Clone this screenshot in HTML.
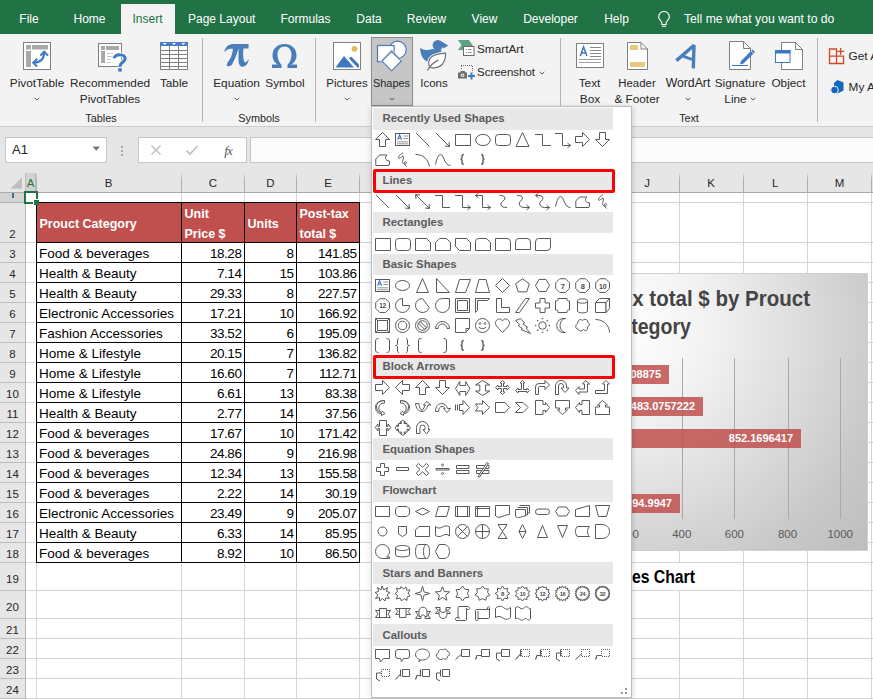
<!DOCTYPE html><html><head><meta charset="utf-8"><style>
html,body{margin:0;padding:0;}
body{width:873px;height:699px;overflow:hidden;position:relative;background:#fff;font-family:"Liberation Sans",sans-serif;}
.t{position:absolute;white-space:pre;line-height:20px;height:20px;}
svg{overflow:visible;}
</style></head><body>
<div style="position:absolute;left:0px;top:0px;width:873px;height:34px;background:#217346;"></div>
<div style="position:absolute;left:121px;top:4px;width:54px;height:30px;background:#f3f3f3;"></div>
<div class="t" style="left:-271px;width:600px;text-align:center;top:8.84px;font-size:12px;color:#ffffff;font-weight:normal;font-family:'Liberation Sans', sans-serif;">File</div>
<div class="t" style="left:-210.5px;width:600px;text-align:center;top:8.84px;font-size:12px;color:#ffffff;font-weight:normal;font-family:'Liberation Sans', sans-serif;">Home</div>
<div class="t" style="left:-152.5px;width:600px;text-align:center;top:8.84px;font-size:12px;color:#217346;font-weight:normal;font-family:'Liberation Sans', sans-serif;">Insert</div>
<div class="t" style="left:-78.30000000000001px;width:600px;text-align:center;top:8.84px;font-size:12px;color:#ffffff;font-weight:normal;font-family:'Liberation Sans', sans-serif;">Page Layout</div>
<div class="t" style="left:5.5px;width:600px;text-align:center;top:8.84px;font-size:12px;color:#ffffff;font-weight:normal;font-family:'Liberation Sans', sans-serif;">Formulas</div>
<div class="t" style="left:69px;width:600px;text-align:center;top:8.84px;font-size:12px;color:#ffffff;font-weight:normal;font-family:'Liberation Sans', sans-serif;">Data</div>
<div class="t" style="left:126.5px;width:600px;text-align:center;top:8.84px;font-size:12px;color:#ffffff;font-weight:normal;font-family:'Liberation Sans', sans-serif;">Review</div>
<div class="t" style="left:184.5px;width:600px;text-align:center;top:8.84px;font-size:12px;color:#ffffff;font-weight:normal;font-family:'Liberation Sans', sans-serif;">View</div>
<div class="t" style="left:250.5px;width:600px;text-align:center;top:8.84px;font-size:12px;color:#ffffff;font-weight:normal;font-family:'Liberation Sans', sans-serif;">Developer</div>
<div class="t" style="left:316.5px;width:600px;text-align:center;top:8.84px;font-size:12px;color:#ffffff;font-weight:normal;font-family:'Liberation Sans', sans-serif;">Help</div>
<svg style="position:absolute;left:656px;top:10px;" width="16" height="18" viewBox="0 0 16 18"><path d="M8 1.5a5.2 5.2 0 0 0-3.2 9.3c.7.6 1.1 1.3 1.1 2.2v1.5h4.2V13c0-.9.4-1.6 1.1-2.2A5.2 5.2 0 0 0 8 1.5z" fill="none" stroke="#fff" stroke-width="1.1"/><path d="M6 16.3h4" stroke="#fff" stroke-width="1.1"/></svg>
<div class="t" style="left:684px;top:8.77px;font-size:12.2px;color:#ffffff;font-weight:normal;font-family:'Liberation Sans', sans-serif;">Tell me what you want to do</div>
<div style="position:absolute;left:0px;top:34px;width:873px;height:92px;background:#f3f3f3;"></div>
<div style="position:absolute;left:0px;top:126px;width:873px;height:1px;background:#cdcdcd;"></div>
<div style="position:absolute;left:202px;top:38px;width:1px;height:84px;background:#b4b4b4;"></div>
<div style="position:absolute;left:315px;top:38px;width:1px;height:84px;background:#b4b4b4;"></div>
<div style="position:absolute;left:560px;top:38px;width:1px;height:84px;background:#b4b4b4;"></div>
<div style="position:absolute;left:817px;top:38px;width:1px;height:84px;background:#b4b4b4;"></div>
<svg style="position:absolute;left:23px;top:42px;" width="28" height="28" viewBox="0 0 28 28"><rect x="0.5" y="0.5" width="27" height="27" fill="#fff" stroke="#7f7f7f"/><rect x="3" y="3" width="5" height="4.5" fill="#a9a9a9"/><rect x="9" y="3" width="16" height="4.5" fill="#a9a9a9"/><rect x="3" y="9" width="5" height="16" fill="#a9a9a9"/><path d="M10.5 20.7 C17.5 20.7 21.2 16.5 21.2 9.8" fill="none" stroke="#3c78c3" stroke-width="2"/><path d="M14.2 16.8 L10.2 20.7 L14.2 24.6" fill="none" stroke="#3c78c3" stroke-width="2"/><path d="M17.3 13.6 L21.2 9.6 L25.1 13.6" fill="none" stroke="#3c78c3" stroke-width="2"/></svg>
<div class="t" style="left:-263px;width:600px;text-align:center;top:72.71px;font-size:11.8px;color:#262626;font-weight:normal;font-family:'Liberation Sans', sans-serif;">PivotTable</div>
<svg style="position:absolute;left:34px;top:96.5px;" width="6" height="4" viewBox="0 0 6 4"><path d="M0.7 0.9 L3 3.1 L5.3 0.9" fill="none" stroke="#555" stroke-width="1"/></svg>
<svg style="position:absolute;left:98px;top:43px;" width="30" height="30" viewBox="0 0 30 30"><rect x="0.5" y="0.5" width="23" height="23" fill="#fff" stroke="#7f7f7f"/><rect x="3" y="3" width="4" height="4" fill="#a9a9a9"/><rect x="8" y="3" width="13" height="4" fill="#a9a9a9"/><rect x="3" y="8" width="4" height="12" fill="#a9a9a9"/><path d="M9 10.5h6M9 13.5h5M9 16.5h4M9 19.5h4" stroke="#c8c8c8" stroke-width="1.2"/><path d="M16.2 15.2 C16.2 10.8 27.2 10.6 27.2 15.6 C27.2 19.4 22 19.2 22 23.2" fill="none" stroke="#f3f3f3" stroke-width="5.5"/><path d="M16.2 15.2 C16.2 10.8 27.2 10.6 27.2 15.6 C27.2 19.4 22 19.2 22 23.2" fill="none" stroke="#3c78c3" stroke-width="3"/><rect x="20.3" y="25.2" width="3.4" height="3.4" fill="#3c78c3"/></svg>
<div class="t" style="left:-190px;width:600px;text-align:center;top:72.71px;font-size:11.8px;color:#262626;font-weight:normal;font-family:'Liberation Sans', sans-serif;">Recommended</div>
<div class="t" style="left:-190px;width:600px;text-align:center;top:88.91px;font-size:11.8px;color:#262626;font-weight:normal;font-family:'Liberation Sans', sans-serif;">PivotTables</div>
<svg style="position:absolute;left:160px;top:42px;" width="28" height="28" viewBox="0 0 28 28"><rect x="0.5" y="0.5" width="27" height="27" fill="#fff" stroke="#7f7f7f"/><rect x="0" y="0" width="28" height="4" fill="#4a7ebb"/><path d="M2.7 1 L6.7 1 L4.7 3 Z" fill="#fff"/><path d="M12 1 L16 1 L14 3 Z" fill="#fff"/><path d="M21.3 1 L25.3 1 L23.3 3 Z" fill="#fff"/><path d="M0 8.5 H28" stroke="#7f7f7f" stroke-width="1"/><path d="M0 12.5 H28" stroke="#7f7f7f" stroke-width="1"/><path d="M0 16.5 H28" stroke="#7f7f7f" stroke-width="1"/><path d="M0 20.5 H28" stroke="#7f7f7f" stroke-width="1"/><path d="M0 24.5 H28" stroke="#7f7f7f" stroke-width="1"/><path d="M9.5 4V28M18.5 4V28" stroke="#7f7f7f" stroke-width="1"/></svg>
<div class="t" style="left:-126px;width:600px;text-align:center;top:72.71px;font-size:11.8px;color:#262626;font-weight:normal;font-family:'Liberation Sans', sans-serif;">Table</div>
<div class="t" style="left:-199px;width:600px;text-align:center;top:108.22px;font-size:10.9px;color:#262626;font-weight:normal;font-family:'Liberation Sans', sans-serif;">Tables</div>
<svg style="position:absolute;left:224px;top:43px;" width="26" height="26" viewBox="0 0 26 26"><path d="M0.3 8.5 C1.5 4.5 4 0.9 9 0.9 L24.6 0.9 L24.6 5.5 L9.5 5.5 C5 5.5 2.5 6.5 1 8.7 Z M9 5 L14.5 5 C13 11 11 16 8 21.5 C6.5 23.8 2.5 24 2.7 21.5 C3 19.5 5.5 17.5 7 14 C8.2 11 8.8 8 9 5 Z M14.5 5 L19.5 5 C19 10 19 14 19.8 17.5 C20.3 20 22.5 20 24.3 16.5 L24.8 17 C23.5 21.5 21.5 23.8 18.5 23.8 C15.5 23.8 14.5 20.5 14.5 16 Z" fill="#4a7ebb"/></svg>
<svg style="position:absolute;left:272px;top:43px;" width="26" height="26" viewBox="0 0 26 26"><path d="M0 25 V21.5 H6 C2 19.5 0.5 16 0.5 12.5 C0.5 5.5 5.5 1 12.5 1 C19.5 1 24.5 5.5 24.5 12.5 C24.5 16 23 19.5 19 21.5 H25 V25 H15.5 V21.8 C18 19 19.5 16 19.5 11.5 C19.5 6.5 16.5 3.5 12.5 3.5 C8.5 3.5 5.5 6.5 5.5 11.5 C5.5 16 7 19 9.5 21.8 V25 Z" fill="#4a7ebb"/></svg>
<div class="t" style="left:-63.5px;width:600px;text-align:center;top:72.71px;font-size:11.8px;color:#262626;font-weight:normal;font-family:'Liberation Sans', sans-serif;">Equation</div>
<svg style="position:absolute;left:233.6px;top:96.5px;" width="6" height="4" viewBox="0 0 6 4"><path d="M0.7 0.9 L3 3.1 L5.3 0.9" fill="none" stroke="#555" stroke-width="1"/></svg>
<div class="t" style="left:-15px;width:600px;text-align:center;top:72.71px;font-size:11.8px;color:#262626;font-weight:normal;font-family:'Liberation Sans', sans-serif;">Symbol</div>
<div class="t" style="left:-41px;width:600px;text-align:center;top:108.25px;font-size:10.82px;color:#262626;font-weight:normal;font-family:'Liberation Sans', sans-serif;">Symbols</div>
<svg style="position:absolute;left:333px;top:42px;" width="28" height="28" viewBox="0 0 28 28"><rect x="0.5" y="0.5" width="27" height="27" fill="#fff" stroke="#7f7f7f"/><circle cx="21.5" cy="6.8" r="2.9" fill="#e9b55a"/><path d="M2.5 25.5 L11 14 L21 25.5 Z" fill="#3f78bb"/><path d="M16 16.5 L18 14.5 L26 22.5 L26 25.5 L24.5 25.5 Z" fill="#3f78bb"/></svg>
<div class="t" style="left:47px;width:600px;text-align:center;top:72.82px;font-size:11.49px;color:#262626;font-weight:normal;font-family:'Liberation Sans', sans-serif;">Pictures</div>
<svg style="position:absolute;left:344px;top:96.5px;" width="6" height="4" viewBox="0 0 6 4"><path d="M0.7 0.9 L3 3.1 L5.3 0.9" fill="none" stroke="#555" stroke-width="1"/></svg>
<div style="position:absolute;left:371px;top:37px;width:42px;height:69px;background:#c6c6c6;border:1px solid #8c8c8c;box-sizing:border-box;"></div>
<svg style="position:absolute;left:371px;top:37px;" width="41" height="40" viewBox="0 0 41 40"><circle cx="26.6" cy="12.8" r="8.6" fill="#fff" stroke="#4a7ebb" stroke-width="1.2"/><rect x="6.5" y="8.5" width="16.6" height="16.2" fill="#fff" stroke="#4a7ebb" stroke-width="1.2"/><path d="M20.6 14.5 L30.2 24.2 L20.6 33.8 L11 24.2 Z" fill="#fff" stroke="#c6c6c6" stroke-width="3"/><path d="M20.6 14.5 L30.2 24.2 L20.6 33.8 L11 24.2 Z" fill="#fff" stroke="#4a7ebb" stroke-width="1.1"/></svg>
<div class="t" style="left:91.5px;width:600px;text-align:center;top:73.02px;font-size:10.91px;color:#262626;font-weight:normal;font-family:'Liberation Sans', sans-serif;">Shapes</div>
<svg style="position:absolute;left:388.8px;top:96.5px;" width="6" height="4" viewBox="0 0 6 4"><path d="M0.7 0.9 L3 3.1 L5.3 0.9" fill="none" stroke="#555" stroke-width="1"/></svg>
<svg style="position:absolute;left:418px;top:38px;" width="32" height="36" viewBox="0 0 32 36"><circle cx="19.9" cy="7.2" r="5.3" fill="#4a7ebb"/><path d="M23.5 3.5 L30.2 7.6 L25.5 10.5 Z" fill="#4a7ebb"/><path d="M2.1 9.7 C5 12.2 10 12.8 14.5 11 L24 12.5 L18.5 21 L10 23.8 C4.5 22 2.2 16 2.1 9.7 Z" fill="#4a7ebb"/><path d="M11 27.5 C9.5 20.5 13.5 16 27.6 15.1 C27.8 24.5 23 30.5 14 29.8 C12.5 29.6 11.5 28.8 11 27.5 Z" fill="#fff" stroke="#f3f3f3" stroke-width="3"/><path d="M11 27.5 C9.5 20.5 13.5 16 27.6 15.1 C27.8 24.5 23 30.5 14 29.8 C12.5 29.6 11.5 28.8 11 27.5 Z" fill="#fff" stroke="#737373" stroke-width="1.2"/><path d="M9.4 32.5 C12 28 15 24.5 20.5 22.2" fill="none" stroke="#737373" stroke-width="1.3"/></svg>
<div class="t" style="left:134px;width:600px;text-align:center;top:72.81px;font-size:11.51px;color:#262626;font-weight:normal;font-family:'Liberation Sans', sans-serif;">Icons</div>
<svg style="position:absolute;left:457px;top:39px;" width="20" height="18" viewBox="0 0 20 18"><path d="M1 1 L12 1 L16 7 L6 7 L6 11 L1 11 L4.5 6 Z" fill="#5aa383"/><rect x="6.5" y="7.5" width="10.5" height="9" fill="#fff" stroke="#6b6b6b"/><path d="M8.8 10.5h1M11 10.5h3.5M8.8 13.5h1M11 13.5h3.5" stroke="#8a8a8a" stroke-width="1"/></svg>
<div class="t" style="left:477px;top:39.11px;font-size:11.8px;color:#262626;font-weight:normal;font-family:'Liberation Sans', sans-serif;">SmartArt</div>
<svg style="position:absolute;left:457px;top:63px;" width="20" height="18" viewBox="0 0 20 18"><path d="M4 2.5 H16 M15.5 3 V9 M4.5 3 V7" fill="none" stroke="#6a6a6a" stroke-width="1" stroke-dasharray="1 1"/><path d="M1 9.5 H3 L4 8 H7.5 L8.5 9.5 H10 V15.5 H1 Z" fill="#6d6d6d"/><circle cx="5.5" cy="12.3" r="1.8" fill="#fff"/><circle cx="5.5" cy="12.3" r="0.9" fill="#6d6d6d"/><path d="M14.5 9.5 V16.5 M11 13 H18" stroke="#3c78c3" stroke-width="2"/></svg>
<div class="t" style="left:477px;top:62.03px;font-size:11.47px;color:#262626;font-weight:normal;font-family:'Liberation Sans', sans-serif;">Screenshot</div>
<svg style="position:absolute;left:539.3px;top:70.5px;" width="6" height="4" viewBox="0 0 6 4"><path d="M0.7 0.9 L3 3.1 L5.3 0.9" fill="none" stroke="#555" stroke-width="1"/></svg>
<svg style="position:absolute;left:576px;top:43px;" width="28" height="25" viewBox="0 0 28 25"><rect x="0.5" y="0.5" width="27" height="24" fill="#fff" stroke="#7f7f7f"/><path d="M4.3 13 L7.6 4 L10.9 13 M5.5 10 H9.7" fill="none" stroke="#3c78c3" stroke-width="1.5"/><path d="M14 4.5 H25 M14 7.5 H25 M14 10.5 H25 M14 13.5 H25" stroke="#8c8c8c" stroke-width="1"/><path d="M3 16.5 H25 M3 19.5 H25" stroke="#a0a0a0" stroke-width="1"/></svg>
<div class="t" style="left:289.5px;width:600px;text-align:center;top:72.71px;font-size:11.8px;color:#262626;font-weight:normal;font-family:'Liberation Sans', sans-serif;">Text</div>
<div class="t" style="left:290px;width:600px;text-align:center;top:88.91px;font-size:11.8px;color:#262626;font-weight:normal;font-family:'Liberation Sans', sans-serif;">Box</div>
<svg style="position:absolute;left:627px;top:42px;" width="22" height="28" viewBox="0 0 22 28"><path d="M0.5 0.5 H14 L20.5 7 V27.5 H0.5 Z" fill="#fff" stroke="#7f7f7f"/><path d="M14 0.5 V7 H20.5" fill="none" stroke="#7f7f7f"/><rect x="3" y="3" width="8" height="5" fill="#eac77f"/><rect x="3" y="20" width="15" height="5" fill="#eac77f"/></svg>
<div class="t" style="left:337px;width:600px;text-align:center;top:72.84px;font-size:11.43px;color:#262626;font-weight:normal;font-family:'Liberation Sans', sans-serif;">Header</div>
<div class="t" style="left:337px;width:600px;text-align:center;top:88.91px;font-size:11.8px;color:#262626;font-weight:normal;font-family:'Liberation Sans', sans-serif;">&amp; Footer</div>
<svg style="position:absolute;left:674px;top:42px;" width="26" height="28" viewBox="0 0 26 28"><path d="M2.4 18.6 L20 3.2 L19.3 26.4" fill="none" stroke="#4a7ebb" stroke-width="3.4" stroke-linejoin="bevel"/><path d="M9.3 14.3 L18 17.4" stroke="#4a7ebb" stroke-width="3"/></svg>
<div class="t" style="left:388px;width:600px;text-align:center;top:72.56px;font-size:12.25px;color:#262626;font-weight:normal;font-family:'Liberation Sans', sans-serif;">WordArt</div>
<svg style="position:absolute;left:685px;top:96.5px;" width="6" height="4" viewBox="0 0 6 4"><path d="M0.7 0.9 L3 3.1 L5.3 0.9" fill="none" stroke="#555" stroke-width="1"/></svg>
<svg style="position:absolute;left:729px;top:41px;" width="28" height="30" viewBox="0 0 28 30"><path d="M0.5 0.5 H14.5 L21.5 7.5 V28.5 H0.5 Z" fill="#fff" stroke="#7f7f7f"/><path d="M14.5 0.5 V7.5 H21.5" fill="none" stroke="#7f7f7f"/><path d="M3 24.5 H19" stroke="#3c78c3" stroke-width="1"/><path d="M12 20 L23.5 8.5 L26 11 L14.5 22.5 L11 23.5 Z" fill="#3c78c3"/><path d="M22 10 L24.5 12.5" stroke="#fff" stroke-width="0.8"/></svg>
<div class="t" style="left:440px;width:600px;text-align:center;top:72.71px;font-size:11.8px;color:#262626;font-weight:normal;font-family:'Liberation Sans', sans-serif;">Signature</div>
<div class="t" style="left:435.5px;width:600px;text-align:center;top:88.91px;font-size:11.8px;color:#262626;font-weight:normal;font-family:'Liberation Sans', sans-serif;">Line</div>
<svg style="position:absolute;left:749.7px;top:97px;" width="6" height="4" viewBox="0 0 6 4"><path d="M0.7 0.9 L3 3.1 L5.3 0.9" fill="none" stroke="#555" stroke-width="1"/></svg>
<svg style="position:absolute;left:774px;top:41px;" width="30" height="30" viewBox="0 0 30 30"><path d="M7.5 1.5 H21.5 L28.5 8.5 V28.5 H7.5 Z" fill="#fff" stroke="#7f7f7f"/><path d="M21.5 1.5 V8.5 H28.5" fill="none" stroke="#7f7f7f"/><rect x="1.5" y="9.5" width="14.5" height="12" fill="#fff" stroke="#3c78c3"/><rect x="1" y="9" width="15.5" height="3.5" fill="#3c78c3"/></svg>
<div class="t" style="left:488.5px;width:600px;text-align:center;top:72.71px;font-size:11.8px;color:#262626;font-weight:normal;font-family:'Liberation Sans', sans-serif;">Object</div>
<div class="t" style="left:389px;width:600px;text-align:center;top:108.32px;font-size:10.63px;color:#262626;font-weight:normal;font-family:'Liberation Sans', sans-serif;">Text</div>
<svg style="position:absolute;left:828px;top:47px;" width="18" height="18" viewBox="0 0 18 18"><path d="M1.5 2 H8.5 V16.5 H1.5 Z M1.5 9.2 H15.5 V16.5 H8.5" fill="none" stroke="#d24726" stroke-width="1.3"/><path d="M12.7 1 V7.8 M9.3 4.4 H16.1" stroke="#d24726" stroke-width="1.3"/></svg>
<div class="t" style="left:848.6px;top:46.41px;font-size:11.8px;color:#262626;font-weight:normal;font-family:'Liberation Sans', sans-serif;">Get Add-ins</div>
<svg style="position:absolute;left:829px;top:79px;" width="18" height="18" viewBox="0 0 18 18"><path d="M8.5 1 L14.5 3.5 L14.5 11.5 L8.5 14.5 L5 12.5 L5 4 Z" fill="#1167bd"/><circle cx="5.5" cy="11" r="3.8" fill="#1167bd" stroke="#f3f3f3" stroke-width="1"/></svg>
<div class="t" style="left:848.6px;top:76.91px;font-size:11.8px;color:#262626;font-weight:normal;font-family:'Liberation Sans', sans-serif;">My Add-ins</div>
<div style="position:absolute;left:0px;top:127px;width:873px;height:46px;background:#e6e6e6;"></div>
<div style="position:absolute;left:5px;top:137px;width:101.5px;height:25.5px;background:#fff;border:1px solid #c6c6c6;box-sizing:border-box;"></div>
<div class="t" style="left:12px;top:140.30px;font-size:13px;color:#262626;font-weight:normal;font-family:'Liberation Sans', sans-serif;">A1</div>
<svg style="position:absolute;left:92px;top:146px;" width="9" height="6" viewBox="0 0 9 6"><path d="M0.5 0.5 H8 L4.25 4.8 Z" fill="#777"/></svg>
<div style="position:absolute;left:121px;top:146px;width:2px;height:2px;background:#a8a8a8;"></div>
<div style="position:absolute;left:121px;top:150px;width:2px;height:2px;background:#a8a8a8;"></div>
<div style="position:absolute;left:121px;top:154px;width:2px;height:2px;background:#a8a8a8;"></div>
<div style="position:absolute;left:137.5px;top:137px;width:109px;height:25.5px;background:#fff;border:1px solid #c6c6c6;box-sizing:border-box;"></div>
<svg style="position:absolute;left:150px;top:144px;" width="12" height="12" viewBox="0 0 12 12"><path d="M1.5 1.5 L10.5 10.5 M10.5 1.5 L1.5 10.5" stroke="#bcbcbc" stroke-width="1.3"/></svg>
<svg style="position:absolute;left:185px;top:144px;" width="14" height="12" viewBox="0 0 14 12"><path d="M1.5 6.5 L5 10 L12.5 2" fill="none" stroke="#bcbcbc" stroke-width="1.6"/></svg>
<div class="t" style="left:-72px;width:600px;text-align:center;top:140.50px;font-size:13px;color:#555;font-weight:normal;font-family:'Liberation Serif', serif;font-style:italic;letter-spacing:-1px;">fx</div>
<div style="position:absolute;left:250px;top:137px;width:623px;height:25.5px;background:#fbfbfb;border:1px solid #c6c6c6;border-right:none;box-sizing:border-box;"></div>
<div style="position:absolute;left:25px;top:192px;width:848px;height:507px;background:#fff;"></div>
<div style="position:absolute;left:0px;top:173px;width:873px;height:19px;background:#e6e6e6;"></div>
<div style="position:absolute;left:0px;top:192px;width:25px;height:507px;background:#e6e6e6;"></div>
<div style="position:absolute;left:36px;top:192px;width:1px;height:507px;background:#d4d4d4;"></div>
<div style="position:absolute;left:181px;top:192px;width:1px;height:507px;background:#d4d4d4;"></div>
<div style="position:absolute;left:244px;top:192px;width:1px;height:507px;background:#d4d4d4;"></div>
<div style="position:absolute;left:296px;top:192px;width:1px;height:507px;background:#d4d4d4;"></div>
<div style="position:absolute;left:359px;top:192px;width:1px;height:507px;background:#d4d4d4;"></div>
<div style="position:absolute;left:423px;top:192px;width:1px;height:507px;background:#d4d4d4;"></div>
<div style="position:absolute;left:487px;top:192px;width:1px;height:507px;background:#d4d4d4;"></div>
<div style="position:absolute;left:551px;top:192px;width:1px;height:507px;background:#d4d4d4;"></div>
<div style="position:absolute;left:615px;top:192px;width:1px;height:507px;background:#d4d4d4;"></div>
<div style="position:absolute;left:679px;top:192px;width:1px;height:507px;background:#d4d4d4;"></div>
<div style="position:absolute;left:743px;top:192px;width:1px;height:507px;background:#d4d4d4;"></div>
<div style="position:absolute;left:807px;top:192px;width:1px;height:507px;background:#d4d4d4;"></div>
<div style="position:absolute;left:871px;top:192px;width:1px;height:507px;background:#d4d4d4;"></div>
<div style="position:absolute;left:25px;top:202px;width:848px;height:1px;background:#d4d4d4;"></div>
<div style="position:absolute;left:25px;top:242px;width:848px;height:1px;background:#d4d4d4;"></div>
<div style="position:absolute;left:25px;top:262px;width:848px;height:1px;background:#d4d4d4;"></div>
<div style="position:absolute;left:25px;top:282px;width:848px;height:1px;background:#d4d4d4;"></div>
<div style="position:absolute;left:25px;top:302px;width:848px;height:1px;background:#d4d4d4;"></div>
<div style="position:absolute;left:25px;top:322px;width:848px;height:1px;background:#d4d4d4;"></div>
<div style="position:absolute;left:25px;top:342px;width:848px;height:1px;background:#d4d4d4;"></div>
<div style="position:absolute;left:25px;top:362px;width:848px;height:1px;background:#d4d4d4;"></div>
<div style="position:absolute;left:25px;top:382px;width:848px;height:1px;background:#d4d4d4;"></div>
<div style="position:absolute;left:25px;top:402px;width:848px;height:1px;background:#d4d4d4;"></div>
<div style="position:absolute;left:25px;top:422px;width:848px;height:1px;background:#d4d4d4;"></div>
<div style="position:absolute;left:25px;top:442px;width:848px;height:1px;background:#d4d4d4;"></div>
<div style="position:absolute;left:25px;top:462px;width:848px;height:1px;background:#d4d4d4;"></div>
<div style="position:absolute;left:25px;top:482px;width:848px;height:1px;background:#d4d4d4;"></div>
<div style="position:absolute;left:25px;top:502px;width:848px;height:1px;background:#d4d4d4;"></div>
<div style="position:absolute;left:25px;top:522px;width:848px;height:1px;background:#d4d4d4;"></div>
<div style="position:absolute;left:25px;top:542px;width:848px;height:1px;background:#d4d4d4;"></div>
<div style="position:absolute;left:25px;top:562px;width:848px;height:1px;background:#d4d4d4;"></div>
<div style="position:absolute;left:25px;top:590px;width:848px;height:1px;background:#d4d4d4;"></div>
<div style="position:absolute;left:25px;top:618px;width:848px;height:1px;background:#d4d4d4;"></div>
<div style="position:absolute;left:25px;top:638px;width:848px;height:1px;background:#d4d4d4;"></div>
<div style="position:absolute;left:25px;top:658px;width:848px;height:1px;background:#d4d4d4;"></div>
<div style="position:absolute;left:25px;top:678px;width:848px;height:1px;background:#d4d4d4;"></div>
<div style="position:absolute;left:25px;top:698px;width:848px;height:1px;background:#d4d4d4;"></div>
<div style="position:absolute;left:36px;top:173px;width:1px;height:19px;background:linear-gradient(#d8d8d8,#b0b0b0 40%);"></div>
<div style="position:absolute;left:181px;top:173px;width:1px;height:19px;background:linear-gradient(#d8d8d8,#b0b0b0 40%);"></div>
<div style="position:absolute;left:244px;top:173px;width:1px;height:19px;background:linear-gradient(#d8d8d8,#b0b0b0 40%);"></div>
<div style="position:absolute;left:296px;top:173px;width:1px;height:19px;background:linear-gradient(#d8d8d8,#b0b0b0 40%);"></div>
<div style="position:absolute;left:359px;top:173px;width:1px;height:19px;background:linear-gradient(#d8d8d8,#b0b0b0 40%);"></div>
<div style="position:absolute;left:423px;top:173px;width:1px;height:19px;background:linear-gradient(#d8d8d8,#b0b0b0 40%);"></div>
<div style="position:absolute;left:487px;top:173px;width:1px;height:19px;background:linear-gradient(#d8d8d8,#b0b0b0 40%);"></div>
<div style="position:absolute;left:551px;top:173px;width:1px;height:19px;background:linear-gradient(#d8d8d8,#b0b0b0 40%);"></div>
<div style="position:absolute;left:615px;top:173px;width:1px;height:19px;background:linear-gradient(#d8d8d8,#b0b0b0 40%);"></div>
<div style="position:absolute;left:679px;top:173px;width:1px;height:19px;background:linear-gradient(#d8d8d8,#b0b0b0 40%);"></div>
<div style="position:absolute;left:743px;top:173px;width:1px;height:19px;background:linear-gradient(#d8d8d8,#b0b0b0 40%);"></div>
<div style="position:absolute;left:807px;top:173px;width:1px;height:19px;background:linear-gradient(#d8d8d8,#b0b0b0 40%);"></div>
<div style="position:absolute;left:871px;top:173px;width:1px;height:19px;background:linear-gradient(#d8d8d8,#b0b0b0 40%);"></div>
<div style="position:absolute;left:0px;top:192px;width:873px;height:1px;background:#ababab;"></div>
<div style="position:absolute;left:0px;top:202px;width:25px;height:1px;background:#bdbdbd;"></div>
<div style="position:absolute;left:0px;top:242px;width:25px;height:1px;background:#bdbdbd;"></div>
<div style="position:absolute;left:0px;top:262px;width:25px;height:1px;background:#bdbdbd;"></div>
<div style="position:absolute;left:0px;top:282px;width:25px;height:1px;background:#bdbdbd;"></div>
<div style="position:absolute;left:0px;top:302px;width:25px;height:1px;background:#bdbdbd;"></div>
<div style="position:absolute;left:0px;top:322px;width:25px;height:1px;background:#bdbdbd;"></div>
<div style="position:absolute;left:0px;top:342px;width:25px;height:1px;background:#bdbdbd;"></div>
<div style="position:absolute;left:0px;top:362px;width:25px;height:1px;background:#bdbdbd;"></div>
<div style="position:absolute;left:0px;top:382px;width:25px;height:1px;background:#bdbdbd;"></div>
<div style="position:absolute;left:0px;top:402px;width:25px;height:1px;background:#bdbdbd;"></div>
<div style="position:absolute;left:0px;top:422px;width:25px;height:1px;background:#bdbdbd;"></div>
<div style="position:absolute;left:0px;top:442px;width:25px;height:1px;background:#bdbdbd;"></div>
<div style="position:absolute;left:0px;top:462px;width:25px;height:1px;background:#bdbdbd;"></div>
<div style="position:absolute;left:0px;top:482px;width:25px;height:1px;background:#bdbdbd;"></div>
<div style="position:absolute;left:0px;top:502px;width:25px;height:1px;background:#bdbdbd;"></div>
<div style="position:absolute;left:0px;top:522px;width:25px;height:1px;background:#bdbdbd;"></div>
<div style="position:absolute;left:0px;top:542px;width:25px;height:1px;background:#bdbdbd;"></div>
<div style="position:absolute;left:0px;top:562px;width:25px;height:1px;background:#bdbdbd;"></div>
<div style="position:absolute;left:0px;top:590px;width:25px;height:1px;background:#bdbdbd;"></div>
<div style="position:absolute;left:0px;top:618px;width:25px;height:1px;background:#bdbdbd;"></div>
<div style="position:absolute;left:0px;top:638px;width:25px;height:1px;background:#bdbdbd;"></div>
<div style="position:absolute;left:0px;top:658px;width:25px;height:1px;background:#bdbdbd;"></div>
<div style="position:absolute;left:0px;top:678px;width:25px;height:1px;background:#bdbdbd;"></div>
<div style="position:absolute;left:0px;top:698px;width:25px;height:1px;background:#bdbdbd;"></div>
<div style="position:absolute;left:25px;top:192px;width:1px;height:507px;background:#b8b8b8;"></div>
<svg style="position:absolute;left:10px;top:176px;" width="13" height="13" viewBox="0 0 13 13"><path d="M0.5 12.7 L12 1 L12 12.7 Z" fill="#bfbfbf"/></svg>
<div style="position:absolute;left:25px;top:173px;width:11px;height:19px;background:#d2d2d2;border-left:1px solid #bdbdbd;border-right:1px solid #bdbdbd;box-sizing:border-box;"></div>
<div class="t" style="left:-269.3px;width:600px;text-align:center;top:172.92px;font-size:11.5px;color:#217346;font-weight:normal;font-family:'Liberation Sans', sans-serif;">A</div>
<div style="position:absolute;left:0px;top:192px;width:25px;height:11px;background:#d3d3d3;border-bottom:1px solid #b0b0b0;border-top:1px solid #ababab;box-sizing:border-box;"></div>
<div style="position:absolute;left:12.3px;top:193px;width:1.6px;height:5px;background:#3d6f8f;"></div>
<div class="t" style="left:-191.5px;width:600px;text-align:center;top:172.52px;font-size:11.5px;color:#262626;font-weight:normal;font-family:'Liberation Sans', sans-serif;">B</div>
<div class="t" style="left:-87.19999999999999px;width:600px;text-align:center;top:172.52px;font-size:11.5px;color:#262626;font-weight:normal;font-family:'Liberation Sans', sans-serif;">C</div>
<div class="t" style="left:-29.69999999999999px;width:600px;text-align:center;top:172.52px;font-size:11.5px;color:#262626;font-weight:normal;font-family:'Liberation Sans', sans-serif;">D</div>
<div class="t" style="left:28px;width:600px;text-align:center;top:172.52px;font-size:11.5px;color:#262626;font-weight:normal;font-family:'Liberation Sans', sans-serif;">E</div>
<div class="t" style="left:91px;width:600px;text-align:center;top:172.52px;font-size:11.5px;color:#262626;font-weight:normal;font-family:'Liberation Sans', sans-serif;">F</div>
<div class="t" style="left:155px;width:600px;text-align:center;top:172.52px;font-size:11.5px;color:#262626;font-weight:normal;font-family:'Liberation Sans', sans-serif;">G</div>
<div class="t" style="left:219px;width:600px;text-align:center;top:172.52px;font-size:11.5px;color:#262626;font-weight:normal;font-family:'Liberation Sans', sans-serif;">H</div>
<div class="t" style="left:283px;width:600px;text-align:center;top:172.52px;font-size:11.5px;color:#262626;font-weight:normal;font-family:'Liberation Sans', sans-serif;">I</div>
<div class="t" style="left:347px;width:600px;text-align:center;top:172.52px;font-size:11.5px;color:#262626;font-weight:normal;font-family:'Liberation Sans', sans-serif;">J</div>
<div class="t" style="left:411px;width:600px;text-align:center;top:172.52px;font-size:11.5px;color:#262626;font-weight:normal;font-family:'Liberation Sans', sans-serif;">K</div>
<div class="t" style="left:475.29999999999995px;width:600px;text-align:center;top:172.52px;font-size:11.5px;color:#262626;font-weight:normal;font-family:'Liberation Sans', sans-serif;">L</div>
<div class="t" style="left:539.5px;width:600px;text-align:center;top:172.52px;font-size:11.5px;color:#262626;font-weight:normal;font-family:'Liberation Sans', sans-serif;">M</div>
<div class="t" style="left:-287.5px;width:600px;text-align:center;top:223.52px;font-size:11.5px;color:#262626;font-weight:normal;font-family:'Liberation Sans', sans-serif;">2</div>
<div class="t" style="left:-287.5px;width:600px;text-align:center;top:243.52px;font-size:11.5px;color:#262626;font-weight:normal;font-family:'Liberation Sans', sans-serif;">3</div>
<div class="t" style="left:-287.5px;width:600px;text-align:center;top:263.52px;font-size:11.5px;color:#262626;font-weight:normal;font-family:'Liberation Sans', sans-serif;">4</div>
<div class="t" style="left:-287.5px;width:600px;text-align:center;top:283.52px;font-size:11.5px;color:#262626;font-weight:normal;font-family:'Liberation Sans', sans-serif;">5</div>
<div class="t" style="left:-287.5px;width:600px;text-align:center;top:303.52px;font-size:11.5px;color:#262626;font-weight:normal;font-family:'Liberation Sans', sans-serif;">6</div>
<div class="t" style="left:-287.5px;width:600px;text-align:center;top:323.52px;font-size:11.5px;color:#262626;font-weight:normal;font-family:'Liberation Sans', sans-serif;">7</div>
<div class="t" style="left:-287.5px;width:600px;text-align:center;top:343.52px;font-size:11.5px;color:#262626;font-weight:normal;font-family:'Liberation Sans', sans-serif;">8</div>
<div class="t" style="left:-287.5px;width:600px;text-align:center;top:363.52px;font-size:11.5px;color:#262626;font-weight:normal;font-family:'Liberation Sans', sans-serif;">9</div>
<div class="t" style="left:-287.5px;width:600px;text-align:center;top:383.52px;font-size:11.5px;color:#262626;font-weight:normal;font-family:'Liberation Sans', sans-serif;">10</div>
<div class="t" style="left:-287.5px;width:600px;text-align:center;top:403.52px;font-size:11.5px;color:#262626;font-weight:normal;font-family:'Liberation Sans', sans-serif;">11</div>
<div class="t" style="left:-287.5px;width:600px;text-align:center;top:423.52px;font-size:11.5px;color:#262626;font-weight:normal;font-family:'Liberation Sans', sans-serif;">12</div>
<div class="t" style="left:-287.5px;width:600px;text-align:center;top:443.52px;font-size:11.5px;color:#262626;font-weight:normal;font-family:'Liberation Sans', sans-serif;">13</div>
<div class="t" style="left:-287.5px;width:600px;text-align:center;top:463.52px;font-size:11.5px;color:#262626;font-weight:normal;font-family:'Liberation Sans', sans-serif;">14</div>
<div class="t" style="left:-287.5px;width:600px;text-align:center;top:483.52px;font-size:11.5px;color:#262626;font-weight:normal;font-family:'Liberation Sans', sans-serif;">15</div>
<div class="t" style="left:-287.5px;width:600px;text-align:center;top:503.52px;font-size:11.5px;color:#262626;font-weight:normal;font-family:'Liberation Sans', sans-serif;">16</div>
<div class="t" style="left:-287.5px;width:600px;text-align:center;top:523.52px;font-size:11.5px;color:#262626;font-weight:normal;font-family:'Liberation Sans', sans-serif;">17</div>
<div class="t" style="left:-287.5px;width:600px;text-align:center;top:543.52px;font-size:11.5px;color:#262626;font-weight:normal;font-family:'Liberation Sans', sans-serif;">18</div>
<div class="t" style="left:-287.5px;width:600px;text-align:center;top:569.02px;font-size:11.5px;color:#262626;font-weight:normal;font-family:'Liberation Sans', sans-serif;">19</div>
<div class="t" style="left:-287.5px;width:600px;text-align:center;top:597.02px;font-size:11.5px;color:#262626;font-weight:normal;font-family:'Liberation Sans', sans-serif;">20</div>
<div class="t" style="left:-287.5px;width:600px;text-align:center;top:619.52px;font-size:11.5px;color:#262626;font-weight:normal;font-family:'Liberation Sans', sans-serif;">21</div>
<div class="t" style="left:-287.5px;width:600px;text-align:center;top:639.52px;font-size:11.5px;color:#262626;font-weight:normal;font-family:'Liberation Sans', sans-serif;">22</div>
<div class="t" style="left:-287.5px;width:600px;text-align:center;top:659.52px;font-size:11.5px;color:#262626;font-weight:normal;font-family:'Liberation Sans', sans-serif;">23</div>
<div class="t" style="left:-287.5px;width:600px;text-align:center;top:679.52px;font-size:11.5px;color:#262626;font-weight:normal;font-family:'Liberation Sans', sans-serif;">24</div>
<div style="position:absolute;left:36px;top:202px;width:324px;height:361px;background:#fff;"></div>
<div style="position:absolute;left:37px;top:203px;width:322px;height:39px;background:#c0504d;"></div>
<div style="position:absolute;left:36px;top:202px;width:1px;height:361px;background:#000;"></div>
<div style="position:absolute;left:181px;top:202px;width:1px;height:361px;background:#000;"></div>
<div style="position:absolute;left:244px;top:202px;width:1px;height:361px;background:#000;"></div>
<div style="position:absolute;left:296px;top:202px;width:1px;height:361px;background:#000;"></div>
<div style="position:absolute;left:359px;top:202px;width:1px;height:361px;background:#000;"></div>
<div style="position:absolute;left:36px;top:202px;width:324px;height:1px;background:#000;"></div>
<div style="position:absolute;left:36px;top:242px;width:324px;height:1px;background:#000;"></div>
<div style="position:absolute;left:36px;top:262px;width:324px;height:1px;background:#000;"></div>
<div style="position:absolute;left:36px;top:282px;width:324px;height:1px;background:#000;"></div>
<div style="position:absolute;left:36px;top:302px;width:324px;height:1px;background:#000;"></div>
<div style="position:absolute;left:36px;top:322px;width:324px;height:1px;background:#000;"></div>
<div style="position:absolute;left:36px;top:342px;width:324px;height:1px;background:#000;"></div>
<div style="position:absolute;left:36px;top:362px;width:324px;height:1px;background:#000;"></div>
<div style="position:absolute;left:36px;top:382px;width:324px;height:1px;background:#000;"></div>
<div style="position:absolute;left:36px;top:402px;width:324px;height:1px;background:#000;"></div>
<div style="position:absolute;left:36px;top:422px;width:324px;height:1px;background:#000;"></div>
<div style="position:absolute;left:36px;top:442px;width:324px;height:1px;background:#000;"></div>
<div style="position:absolute;left:36px;top:462px;width:324px;height:1px;background:#000;"></div>
<div style="position:absolute;left:36px;top:482px;width:324px;height:1px;background:#000;"></div>
<div style="position:absolute;left:36px;top:502px;width:324px;height:1px;background:#000;"></div>
<div style="position:absolute;left:36px;top:522px;width:324px;height:1px;background:#000;"></div>
<div style="position:absolute;left:36px;top:542px;width:324px;height:1px;background:#000;"></div>
<div style="position:absolute;left:36px;top:562px;width:324px;height:1px;background:#000;"></div>
<div class="t" style="left:39.5px;top:214.17px;font-size:12.5px;color:#fff;font-weight:bold;font-family:'Liberation Sans', sans-serif;">Prouct Category</div>
<div class="t" style="left:184.5px;top:204.07px;font-size:12.5px;color:#fff;font-weight:bold;font-family:'Liberation Sans', sans-serif;">Unit</div>
<div class="t" style="left:184.5px;top:223.77px;font-size:12.5px;color:#fff;font-weight:bold;font-family:'Liberation Sans', sans-serif;">Price $</div>
<div class="t" style="left:247.5px;top:214.17px;font-size:12.5px;color:#fff;font-weight:bold;font-family:'Liberation Sans', sans-serif;">Units</div>
<div class="t" style="left:299.5px;top:204.07px;font-size:12.5px;color:#fff;font-weight:bold;font-family:'Liberation Sans', sans-serif;">Post-tax</div>
<div class="t" style="left:299.5px;top:223.77px;font-size:12.5px;color:#fff;font-weight:bold;font-family:'Liberation Sans', sans-serif;">total $</div>
<div class="t" style="left:39px;top:243.72px;font-size:13.5px;color:#000;font-weight:normal;font-family:'Liberation Sans', sans-serif;">Food &amp; beverages</div>
<div class="t" style="left:-358.5px;width:600px;text-align:right;top:243.72px;font-size:13.5px;color:#000;font-weight:normal;font-family:'Liberation Sans', sans-serif;letter-spacing:-0.45px;">18.28</div>
<div class="t" style="left:-306.5px;width:600px;text-align:right;top:243.72px;font-size:13.5px;color:#000;font-weight:normal;font-family:'Liberation Sans', sans-serif;letter-spacing:-0.45px;">8</div>
<div class="t" style="left:-243.5px;width:600px;text-align:right;top:243.72px;font-size:13.5px;color:#000;font-weight:normal;font-family:'Liberation Sans', sans-serif;letter-spacing:-0.45px;">141.85</div>
<div class="t" style="left:39px;top:263.72px;font-size:13.5px;color:#000;font-weight:normal;font-family:'Liberation Sans', sans-serif;">Health &amp; Beauty</div>
<div class="t" style="left:-358.5px;width:600px;text-align:right;top:263.72px;font-size:13.5px;color:#000;font-weight:normal;font-family:'Liberation Sans', sans-serif;letter-spacing:-0.45px;">7.14</div>
<div class="t" style="left:-306.5px;width:600px;text-align:right;top:263.72px;font-size:13.5px;color:#000;font-weight:normal;font-family:'Liberation Sans', sans-serif;letter-spacing:-0.45px;">15</div>
<div class="t" style="left:-243.5px;width:600px;text-align:right;top:263.72px;font-size:13.5px;color:#000;font-weight:normal;font-family:'Liberation Sans', sans-serif;letter-spacing:-0.45px;">103.86</div>
<div class="t" style="left:39px;top:283.72px;font-size:13.5px;color:#000;font-weight:normal;font-family:'Liberation Sans', sans-serif;">Health &amp; Beauty</div>
<div class="t" style="left:-358.5px;width:600px;text-align:right;top:283.72px;font-size:13.5px;color:#000;font-weight:normal;font-family:'Liberation Sans', sans-serif;letter-spacing:-0.45px;">29.33</div>
<div class="t" style="left:-306.5px;width:600px;text-align:right;top:283.72px;font-size:13.5px;color:#000;font-weight:normal;font-family:'Liberation Sans', sans-serif;letter-spacing:-0.45px;">8</div>
<div class="t" style="left:-243.5px;width:600px;text-align:right;top:283.72px;font-size:13.5px;color:#000;font-weight:normal;font-family:'Liberation Sans', sans-serif;letter-spacing:-0.45px;">227.57</div>
<div class="t" style="left:39px;top:303.72px;font-size:13.5px;color:#000;font-weight:normal;font-family:'Liberation Sans', sans-serif;">Electronic Accessories</div>
<div class="t" style="left:-358.5px;width:600px;text-align:right;top:303.72px;font-size:13.5px;color:#000;font-weight:normal;font-family:'Liberation Sans', sans-serif;letter-spacing:-0.45px;">17.21</div>
<div class="t" style="left:-306.5px;width:600px;text-align:right;top:303.72px;font-size:13.5px;color:#000;font-weight:normal;font-family:'Liberation Sans', sans-serif;letter-spacing:-0.45px;">10</div>
<div class="t" style="left:-243.5px;width:600px;text-align:right;top:303.72px;font-size:13.5px;color:#000;font-weight:normal;font-family:'Liberation Sans', sans-serif;letter-spacing:-0.45px;">166.92</div>
<div class="t" style="left:39px;top:323.72px;font-size:13.5px;color:#000;font-weight:normal;font-family:'Liberation Sans', sans-serif;">Fashion Accessories</div>
<div class="t" style="left:-358.5px;width:600px;text-align:right;top:323.72px;font-size:13.5px;color:#000;font-weight:normal;font-family:'Liberation Sans', sans-serif;letter-spacing:-0.45px;">33.52</div>
<div class="t" style="left:-306.5px;width:600px;text-align:right;top:323.72px;font-size:13.5px;color:#000;font-weight:normal;font-family:'Liberation Sans', sans-serif;letter-spacing:-0.45px;">6</div>
<div class="t" style="left:-243.5px;width:600px;text-align:right;top:323.72px;font-size:13.5px;color:#000;font-weight:normal;font-family:'Liberation Sans', sans-serif;letter-spacing:-0.45px;">195.09</div>
<div class="t" style="left:39px;top:343.72px;font-size:13.5px;color:#000;font-weight:normal;font-family:'Liberation Sans', sans-serif;">Home &amp; Lifestyle</div>
<div class="t" style="left:-358.5px;width:600px;text-align:right;top:343.72px;font-size:13.5px;color:#000;font-weight:normal;font-family:'Liberation Sans', sans-serif;letter-spacing:-0.45px;">20.15</div>
<div class="t" style="left:-306.5px;width:600px;text-align:right;top:343.72px;font-size:13.5px;color:#000;font-weight:normal;font-family:'Liberation Sans', sans-serif;letter-spacing:-0.45px;">7</div>
<div class="t" style="left:-243.5px;width:600px;text-align:right;top:343.72px;font-size:13.5px;color:#000;font-weight:normal;font-family:'Liberation Sans', sans-serif;letter-spacing:-0.45px;">136.82</div>
<div class="t" style="left:39px;top:363.72px;font-size:13.5px;color:#000;font-weight:normal;font-family:'Liberation Sans', sans-serif;">Home &amp; Lifestyle</div>
<div class="t" style="left:-358.5px;width:600px;text-align:right;top:363.72px;font-size:13.5px;color:#000;font-weight:normal;font-family:'Liberation Sans', sans-serif;letter-spacing:-0.45px;">16.60</div>
<div class="t" style="left:-306.5px;width:600px;text-align:right;top:363.72px;font-size:13.5px;color:#000;font-weight:normal;font-family:'Liberation Sans', sans-serif;letter-spacing:-0.45px;">7</div>
<div class="t" style="left:-243.5px;width:600px;text-align:right;top:363.72px;font-size:13.5px;color:#000;font-weight:normal;font-family:'Liberation Sans', sans-serif;letter-spacing:-0.45px;">112.71</div>
<div class="t" style="left:39px;top:383.72px;font-size:13.5px;color:#000;font-weight:normal;font-family:'Liberation Sans', sans-serif;">Home &amp; Lifestyle</div>
<div class="t" style="left:-358.5px;width:600px;text-align:right;top:383.72px;font-size:13.5px;color:#000;font-weight:normal;font-family:'Liberation Sans', sans-serif;letter-spacing:-0.45px;">6.61</div>
<div class="t" style="left:-306.5px;width:600px;text-align:right;top:383.72px;font-size:13.5px;color:#000;font-weight:normal;font-family:'Liberation Sans', sans-serif;letter-spacing:-0.45px;">13</div>
<div class="t" style="left:-243.5px;width:600px;text-align:right;top:383.72px;font-size:13.5px;color:#000;font-weight:normal;font-family:'Liberation Sans', sans-serif;letter-spacing:-0.45px;">83.38</div>
<div class="t" style="left:39px;top:403.72px;font-size:13.5px;color:#000;font-weight:normal;font-family:'Liberation Sans', sans-serif;">Health &amp; Beauty</div>
<div class="t" style="left:-358.5px;width:600px;text-align:right;top:403.72px;font-size:13.5px;color:#000;font-weight:normal;font-family:'Liberation Sans', sans-serif;letter-spacing:-0.45px;">2.77</div>
<div class="t" style="left:-306.5px;width:600px;text-align:right;top:403.72px;font-size:13.5px;color:#000;font-weight:normal;font-family:'Liberation Sans', sans-serif;letter-spacing:-0.45px;">14</div>
<div class="t" style="left:-243.5px;width:600px;text-align:right;top:403.72px;font-size:13.5px;color:#000;font-weight:normal;font-family:'Liberation Sans', sans-serif;letter-spacing:-0.45px;">37.56</div>
<div class="t" style="left:39px;top:423.72px;font-size:13.5px;color:#000;font-weight:normal;font-family:'Liberation Sans', sans-serif;">Food &amp; beverages</div>
<div class="t" style="left:-358.5px;width:600px;text-align:right;top:423.72px;font-size:13.5px;color:#000;font-weight:normal;font-family:'Liberation Sans', sans-serif;letter-spacing:-0.45px;">17.67</div>
<div class="t" style="left:-306.5px;width:600px;text-align:right;top:423.72px;font-size:13.5px;color:#000;font-weight:normal;font-family:'Liberation Sans', sans-serif;letter-spacing:-0.45px;">10</div>
<div class="t" style="left:-243.5px;width:600px;text-align:right;top:423.72px;font-size:13.5px;color:#000;font-weight:normal;font-family:'Liberation Sans', sans-serif;letter-spacing:-0.45px;">171.42</div>
<div class="t" style="left:39px;top:443.72px;font-size:13.5px;color:#000;font-weight:normal;font-family:'Liberation Sans', sans-serif;">Food &amp; beverages</div>
<div class="t" style="left:-358.5px;width:600px;text-align:right;top:443.72px;font-size:13.5px;color:#000;font-weight:normal;font-family:'Liberation Sans', sans-serif;letter-spacing:-0.45px;">24.86</div>
<div class="t" style="left:-306.5px;width:600px;text-align:right;top:443.72px;font-size:13.5px;color:#000;font-weight:normal;font-family:'Liberation Sans', sans-serif;letter-spacing:-0.45px;">9</div>
<div class="t" style="left:-243.5px;width:600px;text-align:right;top:443.72px;font-size:13.5px;color:#000;font-weight:normal;font-family:'Liberation Sans', sans-serif;letter-spacing:-0.45px;">216.98</div>
<div class="t" style="left:39px;top:463.72px;font-size:13.5px;color:#000;font-weight:normal;font-family:'Liberation Sans', sans-serif;">Food &amp; beverages</div>
<div class="t" style="left:-358.5px;width:600px;text-align:right;top:463.72px;font-size:13.5px;color:#000;font-weight:normal;font-family:'Liberation Sans', sans-serif;letter-spacing:-0.45px;">12.34</div>
<div class="t" style="left:-306.5px;width:600px;text-align:right;top:463.72px;font-size:13.5px;color:#000;font-weight:normal;font-family:'Liberation Sans', sans-serif;letter-spacing:-0.45px;">13</div>
<div class="t" style="left:-243.5px;width:600px;text-align:right;top:463.72px;font-size:13.5px;color:#000;font-weight:normal;font-family:'Liberation Sans', sans-serif;letter-spacing:-0.45px;">155.58</div>
<div class="t" style="left:39px;top:483.72px;font-size:13.5px;color:#000;font-weight:normal;font-family:'Liberation Sans', sans-serif;">Food &amp; beverages</div>
<div class="t" style="left:-358.5px;width:600px;text-align:right;top:483.72px;font-size:13.5px;color:#000;font-weight:normal;font-family:'Liberation Sans', sans-serif;letter-spacing:-0.45px;">2.22</div>
<div class="t" style="left:-306.5px;width:600px;text-align:right;top:483.72px;font-size:13.5px;color:#000;font-weight:normal;font-family:'Liberation Sans', sans-serif;letter-spacing:-0.45px;">14</div>
<div class="t" style="left:-243.5px;width:600px;text-align:right;top:483.72px;font-size:13.5px;color:#000;font-weight:normal;font-family:'Liberation Sans', sans-serif;letter-spacing:-0.45px;">30.19</div>
<div class="t" style="left:39px;top:503.72px;font-size:13.5px;color:#000;font-weight:normal;font-family:'Liberation Sans', sans-serif;">Electronic Accessories</div>
<div class="t" style="left:-358.5px;width:600px;text-align:right;top:503.72px;font-size:13.5px;color:#000;font-weight:normal;font-family:'Liberation Sans', sans-serif;letter-spacing:-0.45px;">23.49</div>
<div class="t" style="left:-306.5px;width:600px;text-align:right;top:503.72px;font-size:13.5px;color:#000;font-weight:normal;font-family:'Liberation Sans', sans-serif;letter-spacing:-0.45px;">9</div>
<div class="t" style="left:-243.5px;width:600px;text-align:right;top:503.72px;font-size:13.5px;color:#000;font-weight:normal;font-family:'Liberation Sans', sans-serif;letter-spacing:-0.45px;">205.07</div>
<div class="t" style="left:39px;top:523.72px;font-size:13.5px;color:#000;font-weight:normal;font-family:'Liberation Sans', sans-serif;">Health &amp; Beauty</div>
<div class="t" style="left:-358.5px;width:600px;text-align:right;top:523.72px;font-size:13.5px;color:#000;font-weight:normal;font-family:'Liberation Sans', sans-serif;letter-spacing:-0.45px;">6.33</div>
<div class="t" style="left:-306.5px;width:600px;text-align:right;top:523.72px;font-size:13.5px;color:#000;font-weight:normal;font-family:'Liberation Sans', sans-serif;letter-spacing:-0.45px;">14</div>
<div class="t" style="left:-243.5px;width:600px;text-align:right;top:523.72px;font-size:13.5px;color:#000;font-weight:normal;font-family:'Liberation Sans', sans-serif;letter-spacing:-0.45px;">85.95</div>
<div class="t" style="left:39px;top:543.72px;font-size:13.5px;color:#000;font-weight:normal;font-family:'Liberation Sans', sans-serif;">Food &amp; beverages</div>
<div class="t" style="left:-358.5px;width:600px;text-align:right;top:543.72px;font-size:13.5px;color:#000;font-weight:normal;font-family:'Liberation Sans', sans-serif;letter-spacing:-0.45px;">8.92</div>
<div class="t" style="left:-306.5px;width:600px;text-align:right;top:543.72px;font-size:13.5px;color:#000;font-weight:normal;font-family:'Liberation Sans', sans-serif;letter-spacing:-0.45px;">10</div>
<div class="t" style="left:-243.5px;width:600px;text-align:right;top:543.72px;font-size:13.5px;color:#000;font-weight:normal;font-family:'Liberation Sans', sans-serif;letter-spacing:-0.45px;">86.50</div>
<div style="position:absolute;left:24px;top:191px;width:14px;height:13px;border:2px solid #217346;box-sizing:border-box;"></div>
<div style="position:absolute;left:33px;top:199px;width:6px;height:6px;background:#fff;"></div>
<div style="position:absolute;left:34px;top:200px;width:5px;height:5px;background:#217346;"></div>
<div style="position:absolute;left:420px;top:273px;width:448px;height:278px;background:radial-gradient(circle farthest-corner at 45% 20%, #ffffff 0%, #f3f3f3 25%, #dcdcdc 55%, #c8c8c8 80%, #bdbdbd 100%);border:1px solid #d0d0d0;box-sizing:border-box;"></div>
<div style="position:absolute;left:577px;top:358px;width:1px;height:161px;background:#a9a9a9;"></div>
<div style="position:absolute;left:629px;top:358px;width:1px;height:161px;background:#a9a9a9;"></div>
<div style="position:absolute;left:682px;top:358px;width:1px;height:161px;background:#a9a9a9;"></div>
<div style="position:absolute;left:734px;top:358px;width:1px;height:161px;background:#a9a9a9;"></div>
<div style="position:absolute;left:788px;top:358px;width:1px;height:161px;background:#a9a9a9;"></div>
<div style="position:absolute;left:840px;top:358px;width:1px;height:161px;background:#a9a9a9;"></div>
<div style="position:absolute;left:577px;top:365px;width:92px;height:19px;background:rgba(192,80,77,0.85);"></div>
<div class="t" style="left:61px;width:600px;text-align:right;top:363.89px;font-size:11px;color:#fff;font-weight:bold;font-family:'Liberation Sans', sans-serif;">371.2908875</div>
<div style="position:absolute;left:577px;top:397px;width:126px;height:19px;background:rgba(192,80,77,0.85);"></div>
<div class="t" style="left:95px;width:600px;text-align:right;top:395.89px;font-size:11px;color:#fff;font-weight:bold;font-family:'Liberation Sans', sans-serif;">483.0757222</div>
<div style="position:absolute;left:577px;top:429px;width:224px;height:19px;background:rgba(192,80,77,0.85);"></div>
<div class="t" style="left:193px;width:600px;text-align:right;top:427.89px;font-size:11px;color:#fff;font-weight:bold;font-family:'Liberation Sans', sans-serif;">852.1696417</div>
<div style="position:absolute;left:577px;top:461px;width:23px;height:19px;background:rgba(192,80,77,0.85);"></div>
<div class="t" style="left:-8px;width:600px;text-align:right;top:459.89px;font-size:11px;color:#fff;font-weight:bold;font-family:'Liberation Sans', sans-serif;">1</div>
<div style="position:absolute;left:577px;top:494px;width:103px;height:19px;background:rgba(192,80,77,0.85);"></div>
<div class="t" style="left:72px;width:600px;text-align:right;top:492.89px;font-size:11px;color:#fff;font-weight:bold;font-family:'Liberation Sans', sans-serif;">394.9947</div>
<div class="t" style="left:329.20000000000005px;width:600px;text-align:center;top:524.12px;font-size:11.5px;color:#595959;font-weight:normal;font-family:'Liberation Sans', sans-serif;">200</div>
<div class="t" style="left:381.79999999999995px;width:600px;text-align:center;top:524.12px;font-size:11.5px;color:#595959;font-weight:normal;font-family:'Liberation Sans', sans-serif;">400</div>
<div class="t" style="left:434.4px;width:600px;text-align:center;top:524.12px;font-size:11.5px;color:#595959;font-weight:normal;font-family:'Liberation Sans', sans-serif;">600</div>
<div class="t" style="left:487.5px;width:600px;text-align:center;top:524.12px;font-size:11.5px;color:#595959;font-weight:normal;font-family:'Liberation Sans', sans-serif;">800</div>
<div class="t" style="left:540.2px;width:600px;text-align:center;top:524.12px;font-size:11.5px;color:#595959;font-weight:normal;font-family:'Liberation Sans', sans-serif;">1000</div>
<div class="t" style="left:209.70000000000005px;width:600px;text-align:right;top:288.58px;font-size:22px;color:#444444;font-weight:bold;font-family:'Liberation Sans', sans-serif;transform:scaleX(0.932);transform-origin:100% 50%;">x total $ by Prouct</div>
<div class="t" style="left:91px;width:600px;text-align:right;top:316.98px;font-size:22px;color:#444444;font-weight:bold;font-family:'Liberation Sans', sans-serif;transform:scaleX(0.89);transform-origin:100% 50%;">tegory</div>
<div style="position:absolute;left:600px;top:563px;width:143px;height:27px;background:#fff;"></div>
<div class="t" style="left:94.70000000000005px;width:600px;text-align:right;top:567.32px;font-size:19px;color:#000;font-weight:bold;font-family:'Liberation Sans', sans-serif;transform:scaleX(0.83);transform-origin:100% 50%;">es Chart</div>
<div style="position:absolute;left:371px;top:106px;width:261px;height:592px;background:#fff;border:1px solid #bdbdbd;box-sizing:border-box;box-shadow:-2px 0 5px rgba(0,0,0,0.07), 2px 1px 4px rgba(0,0,0,0.10);"></div>
<div style="position:absolute;left:373px;top:108.00px;width:240px;height:21.5px;background:#e8e8e8;"></div>
<div class="t" style="left:382.5px;top:108.45px;font-size:11.4px;color:#5c5c5c;font-weight:bold;font-family:'Liberation Sans', sans-serif;">Recently Used Shapes</div>
<svg style="position:absolute;left:375px;top:132px;" width="16" height="16" viewBox="0 0 16 16"><path d="M7.5 0.5 L14.5 7.5 H10.5 V14.5 H4.5 V7.5 H0.5 Z" fill="#fff" stroke="#5a5a5a" stroke-width="1" /></svg>
<svg style="position:absolute;left:395px;top:132px;" width="16" height="16" viewBox="0 0 16 16"><rect x="0.5" y="1.5" width="14" height="12" fill="#fff" stroke="#5a5a5a"/><path d="M2.6 7.8 L4.6 2.8 L6.6 7.8 M3.4 6.2 H5.8" fill="none" stroke="#3c78c3" stroke-width="1.1"/><path d="M8.3 4 H13.3 M8.3 6.5 H13.3 M2.2 9.8 H13.3 M2.2 11.8 H13.3" stroke="#8a8a8a" stroke-width="0.9"/></svg>
<svg style="position:absolute;left:415px;top:132px;" width="16" height="16" viewBox="0 0 16 16"><path d="M1 1 L14.5 14.5" fill="none" stroke="#5a5a5a" stroke-width="1" /></svg>
<svg style="position:absolute;left:435px;top:132px;" width="16" height="16" viewBox="0 0 16 16"><path d="M1 1 L14.5 14.5" fill="none" stroke="#5a5a5a" stroke-width="1" /><path d="M10.05 14.01 L14.5 14.5 L14.01 10.05" fill="none" stroke="#5a5a5a" stroke-width="1" /></svg>
<svg style="position:absolute;left:455px;top:132px;" width="16" height="16" viewBox="0 0 16 16"><path d="M0.5 2.5 H15.5 V13.5 H0.5 Z" fill="#fff" stroke="#5a5a5a" stroke-width="1" /></svg>
<svg style="position:absolute;left:475px;top:132px;" width="16" height="16" viewBox="0 0 16 16"><ellipse cx="8" cy="8" rx="7.3" ry="5.6" fill="#fff" stroke="#5a5a5a"/></svg>
<svg style="position:absolute;left:495px;top:132px;" width="16" height="16" viewBox="0 0 16 16"><rect x="0.5" y="2.5" width="15" height="11" rx="3" fill="#fff" stroke="#5a5a5a"/></svg>
<svg style="position:absolute;left:515px;top:132px;" width="16" height="16" viewBox="0 0 16 16"><path d="M7.5 0.5 L14 14.5 H1 Z" fill="#fff" stroke="#5a5a5a" stroke-width="1" /></svg>
<svg style="position:absolute;left:535px;top:132px;" width="16" height="16" viewBox="0 0 16 16"><path d="M0 2.5 H7.5 V13.5 H16" fill="none" stroke="#5a5a5a" stroke-width="1" /></svg>
<svg style="position:absolute;left:555px;top:132px;" width="16" height="16" viewBox="0 0 16 16"><path d="M0 1.5 H7.5 V13.5 H15.5" fill="none" stroke="#5a5a5a" stroke-width="1" /><path d="M12.50 15.90 L15.5 13.5 L12.50 11.10" fill="none" stroke="#5a5a5a" stroke-width="1" /></svg>
<svg style="position:absolute;left:575px;top:132px;" width="16" height="16" viewBox="0 0 16 16"><path d="M0.5 4.5 H7.5 V0.5 L14.5 7.5 L7.5 14.5 V10.5 H0.5 Z" fill="#fff" stroke="#5a5a5a" stroke-width="1" /></svg>
<svg style="position:absolute;left:595px;top:132px;" width="16" height="16" viewBox="0 0 16 16"><path d="M4.5 0.5 H10.5 V7.5 H14.5 L7.5 14.5 L0.5 7.5 H4.5 Z" fill="#fff" stroke="#5a5a5a" stroke-width="1" /></svg>
<svg style="position:absolute;left:375px;top:152px;" width="16" height="16" viewBox="0 0 16 16"><path d="M0.8 13.5 V7 L4.5 3 H12 C9.5 5 9.8 8.5 14.5 9 V12 Q14.5 13.5 13 13.5 Z" fill="#fff" stroke="#5a5a5a" stroke-width="1" /></svg>
<svg style="position:absolute;left:395px;top:152px;" width="16" height="16" viewBox="0 0 16 16"><path d="M8 0.5 C6 2 3 4.5 3.5 6 C4 7 6.5 5 8 4 C9 5 8 8 7.5 9.5 C7 11 8.5 12 10 12 C12 12 12 9.5 10.5 9.5 C9 9.5 8.5 12 11.5 14.5" fill="none" stroke="#5a5a5a" stroke-width="1" /></svg>
<svg style="position:absolute;left:415px;top:152px;" width="16" height="16" viewBox="0 0 16 16"><path d="M0.5 2.5 C8 2.5 13 7 14.5 14.5" fill="none" stroke="#5a5a5a" stroke-width="1" /></svg>
<svg style="position:absolute;left:435px;top:152px;" width="16" height="16" viewBox="0 0 16 16"><path d="M0.5 12.5 C2 6 3.5 2.5 5.5 2.5 C9 2.5 9 13.5 15.5 13.5" fill="none" stroke="#5a5a5a" stroke-width="1" /></svg>
<svg style="position:absolute;left:455px;top:152px;" width="16" height="16" viewBox="0 0 16 16"><path d="M8.8 2.5 C7.3 2.5 7 3 7 4.5 V6 C7 7 6.5 7.3 5.5 7.3 C6.5 7.3 7 7.6 7 8.6 V10.5 C7 12 7.3 12.3 8.8 12.3" fill="none" stroke="#5a5a5a" stroke-width="1.4" /></svg>
<svg style="position:absolute;left:475px;top:152px;" width="16" height="16" viewBox="0 0 16 16"><path d="M6.2 2.5 C7.7 2.5 8 3 8 4.5 V6 C8 7 8.5 7.3 9.5 7.3 C8.5 7.3 8 7.6 8 8.6 V10.5 C8 12 7.7 12.3 6.2 12.3" fill="none" stroke="#5a5a5a" stroke-width="1.4" /></svg>
<div style="position:absolute;left:373px;top:170.00px;width:240px;height:21.5px;background:#e8e8e8;"></div>
<div class="t" style="left:382.5px;top:170.45px;font-size:11.4px;color:#5c5c5c;font-weight:bold;font-family:'Liberation Sans', sans-serif;">Lines</div>
<div style="position:absolute;left:373px;top:168.60px;width:242px;height:24.00px;border:3px solid #ff0000;border-radius:2px;box-sizing:border-box;"></div>
<svg style="position:absolute;left:375px;top:194px;" width="16" height="16" viewBox="0 0 16 16"><path d="M1 1 L14 14" fill="none" stroke="#5a5a5a" stroke-width="1" /></svg>
<svg style="position:absolute;left:395px;top:194px;" width="16" height="16" viewBox="0 0 16 16"><path d="M1 1 L14.5 14.5" fill="none" stroke="#5a5a5a" stroke-width="1" /><path d="M10.05 14.01 L14.5 14.5 L14.01 10.05" fill="none" stroke="#5a5a5a" stroke-width="1" /></svg>
<svg style="position:absolute;left:415px;top:194px;" width="16" height="16" viewBox="0 0 16 16"><path d="M1 1 L14.5 14.5" fill="none" stroke="#5a5a5a" stroke-width="1" /><path d="M10.05 14.01 L14.5 14.5 L14.01 10.05" fill="none" stroke="#5a5a5a" stroke-width="1" /><path d="M4.95 0.99 L0.5 0.5 L0.99 4.95" fill="none" stroke="#5a5a5a" stroke-width="1" /></svg>
<svg style="position:absolute;left:435px;top:194px;" width="16" height="16" viewBox="0 0 16 16"><path d="M0 1.5 H7.5 V13.5 H15" fill="none" stroke="#5a5a5a" stroke-width="1" /></svg>
<svg style="position:absolute;left:455px;top:194px;" width="16" height="16" viewBox="0 0 16 16"><path d="M0 1.5 H7.5 V13.5 H15.5" fill="none" stroke="#5a5a5a" stroke-width="1" /><path d="M12.50 15.90 L15.5 13.5 L12.50 11.10" fill="none" stroke="#5a5a5a" stroke-width="1" /></svg>
<svg style="position:absolute;left:475px;top:194px;" width="16" height="16" viewBox="0 0 16 16"><path d="M0.5 1.5 H7.5 V13.5 H15.5" fill="none" stroke="#5a5a5a" stroke-width="1" /><path d="M12.50 15.90 L15.5 13.5 L12.50 11.10" fill="none" stroke="#5a5a5a" stroke-width="1" /><path d="M3.50 -0.90 L0.5 1.5 L3.50 3.90" fill="none" stroke="#5a5a5a" stroke-width="1" /></svg>
<svg style="position:absolute;left:495px;top:194px;" width="16" height="16" viewBox="0 0 16 16"><path d="M4.5 1.5 Q10 1.5 10 4 Q10 6 7.5 7.5 Q5.5 9 6 11 Q6.5 13.5 12 13.5" fill="none" stroke="#5a5a5a" stroke-width="1" /></svg>
<svg style="position:absolute;left:515px;top:194px;" width="16" height="16" viewBox="0 0 16 16"><path d="M2 1.5 Q7.5 1.5 7.5 4 Q7.5 6 5 7.5 Q3.5 9 4.5 11 Q5.5 13.5 9 13.5 H14.5" fill="none" stroke="#5a5a5a" stroke-width="1" /><path d="M11.50 15.90 L14.5 13.5 L11.50 11.10" fill="none" stroke="#5a5a5a" stroke-width="1" /></svg>
<svg style="position:absolute;left:535px;top:194px;" width="16" height="16" viewBox="0 0 16 16"><path d="M0.5 1.5 H4 Q8 1.5 8 4 Q8 6 5.5 7.5 Q4 9 5 11 Q6 13.5 9.5 13.5 H14.5" fill="none" stroke="#5a5a5a" stroke-width="1" /><path d="M11.50 15.90 L14.5 13.5 L11.50 11.10" fill="none" stroke="#5a5a5a" stroke-width="1" /><path d="M3.50 -0.90 L0.5 1.5 L3.50 3.90" fill="none" stroke="#5a5a5a" stroke-width="1" /></svg>
<svg style="position:absolute;left:555px;top:194px;" width="16" height="16" viewBox="0 0 16 16"><path d="M0.5 12.5 C2 6 3.5 2.5 5.5 2.5 C9 2.5 9 13.5 15.5 13.5" fill="none" stroke="#5a5a5a" stroke-width="1" /></svg>
<svg style="position:absolute;left:575px;top:194px;" width="16" height="16" viewBox="0 0 16 16"><path d="M0.8 13.5 V7 L4.5 3 H12 C9.5 5 9.8 8.5 14.5 9 V12 Q14.5 13.5 13 13.5 Z" fill="#fff" stroke="#5a5a5a" stroke-width="1" /></svg>
<svg style="position:absolute;left:595px;top:194px;" width="16" height="16" viewBox="0 0 16 16"><path d="M8 0.5 C6 2 3 4.5 3.5 6 C4 7 6.5 5 8 4 C9 5 8 8 7.5 9.5 C7 11 8.5 12 10 12 C12 12 12 9.5 10.5 9.5 C9 9.5 8.5 12 11.5 14.5" fill="none" stroke="#5a5a5a" stroke-width="1" /></svg>
<div style="position:absolute;left:373px;top:211.75px;width:240px;height:21.5px;background:#e8e8e8;"></div>
<div class="t" style="left:382.5px;top:212.20px;font-size:11.4px;color:#5c5c5c;font-weight:bold;font-family:'Liberation Sans', sans-serif;">Rectangles</div>
<svg style="position:absolute;left:375px;top:236px;" width="16" height="16" viewBox="0 0 16 16"><path d="M0.5 2.5 H15.5 V14.5 H0.5 Z" fill="#fff" stroke="#5a5a5a" stroke-width="1" /></svg>
<svg style="position:absolute;left:395px;top:236px;" width="16" height="16" viewBox="0 0 16 16"><rect x="0.5" y="2.5" width="15" height="12" rx="3" fill="#fff" stroke="#5a5a5a"/></svg>
<svg style="position:absolute;left:415px;top:236px;" width="16" height="16" viewBox="0 0 16 16"><path d="M0.5 2.5 H11.5 L15.5 6.5 V14.5 H0.5 Z" fill="#fff" stroke="#5a5a5a" stroke-width="1" /></svg>
<svg style="position:absolute;left:435px;top:236px;" width="16" height="16" viewBox="0 0 16 16"><path d="M4.5 2.5 H11.5 L15.5 6.5 V14.5 H0.5 V6.5 Z" fill="#fff" stroke="#5a5a5a" stroke-width="1" /></svg>
<svg style="position:absolute;left:455px;top:236px;" width="16" height="16" viewBox="0 0 16 16"><path d="M0.5 2.5 H11.5 L15.5 6.5 V14.5 H4.5 L0.5 10.5 Z" fill="#fff" stroke="#5a5a5a" stroke-width="1" /></svg>
<svg style="position:absolute;left:475px;top:236px;" width="16" height="16" viewBox="0 0 16 16"><path d="M3.5 2.5 H11.5 L15.5 6.5 V14.5 H0.5 V5.5 Q0.5 2.5 3.5 2.5 Z" fill="#fff" stroke="#5a5a5a" stroke-width="1" /></svg>
<svg style="position:absolute;left:495px;top:236px;" width="16" height="16" viewBox="0 0 16 16"><path d="M0.5 2.5 H12 Q15.5 2.5 15.5 6 V14.5 H0.5 Z" fill="#fff" stroke="#5a5a5a" stroke-width="1" /></svg>
<svg style="position:absolute;left:515px;top:236px;" width="16" height="16" viewBox="0 0 16 16"><path d="M3.5 2.5 H12 Q15.5 2.5 15.5 6 V13.5 H0.5 V6 Q0.5 2.5 3.5 2.5 Z" fill="#fff" stroke="#5a5a5a" stroke-width="1" /></svg>
<svg style="position:absolute;left:535px;top:236px;" width="16" height="16" viewBox="0 0 16 16"><path d="M3.5 2.5 H15.5 V11 Q15.5 14.5 12 14.5 H0.5 V6 Q0.5 2.5 3.5 2.5 Z" fill="#fff" stroke="#5a5a5a" stroke-width="1" /></svg>
<div style="position:absolute;left:373px;top:253.50px;width:240px;height:21.5px;background:#e8e8e8;"></div>
<div class="t" style="left:382.5px;top:253.95px;font-size:11.4px;color:#5c5c5c;font-weight:bold;font-family:'Liberation Sans', sans-serif;">Basic Shapes</div>
<svg style="position:absolute;left:375px;top:278px;" width="16" height="16" viewBox="0 0 16 16"><rect x="0.5" y="1.5" width="14" height="12" fill="#fff" stroke="#5a5a5a"/><path d="M2.6 7.8 L4.6 2.8 L6.6 7.8 M3.4 6.2 H5.8" fill="none" stroke="#3c78c3" stroke-width="1.1"/><path d="M8.3 4 H13.3 M8.3 6.5 H13.3 M2.2 9.8 H13.3 M2.2 11.8 H13.3" stroke="#8a8a8a" stroke-width="0.9"/></svg>
<svg style="position:absolute;left:395px;top:278px;" width="16" height="16" viewBox="0 0 16 16"><ellipse cx="7.5" cy="7.5" rx="7" ry="5" fill="#fff" stroke="#5a5a5a"/></svg>
<svg style="position:absolute;left:415px;top:278px;" width="16" height="16" viewBox="0 0 16 16"><path d="M7.5 0.5 L13.5 14.5 H1.5 Z" fill="#fff" stroke="#5a5a5a" stroke-width="1" /></svg>
<svg style="position:absolute;left:435px;top:278px;" width="16" height="16" viewBox="0 0 16 16"><path d="M1.5 0.5 L14.5 14.5 H1.5 Z" fill="#fff" stroke="#5a5a5a" stroke-width="1" /></svg>
<svg style="position:absolute;left:455px;top:278px;" width="16" height="16" viewBox="0 0 16 16"><path d="M4.5 1.5 H15.5 L10.5 14.5 H0.5 Z" fill="#fff" stroke="#5a5a5a" stroke-width="1" /></svg>
<svg style="position:absolute;left:475px;top:278px;" width="16" height="16" viewBox="0 0 16 16"><path d="M4 1.5 H11 L14.5 14.5 H0.5 Z" fill="#fff" stroke="#5a5a5a" stroke-width="1" /></svg>
<svg style="position:absolute;left:495px;top:278px;" width="16" height="16" viewBox="0 0 16 16"><path d="M7.50 0.50 L14.50 7.50 L7.50 14.50 L0.50 7.50 Z" fill="#fff" stroke="#5a5a5a" stroke-width="1" /></svg>
<svg style="position:absolute;left:515px;top:278px;" width="16" height="16" viewBox="0 0 16 16"><path d="M7.50 0.80 L14.35 5.78 L11.73 13.82 L3.27 13.82 L0.65 5.78 Z" fill="#fff" stroke="#5a5a5a" stroke-width="1" /></svg>
<svg style="position:absolute;left:535px;top:278px;" width="16" height="16" viewBox="0 0 16 16"><path d="M14.50 7.50 L11.00 13.56 L4.00 13.56 L0.50 7.50 L4.00 1.44 L11.00 1.44 Z" fill="#fff" stroke="#5a5a5a" stroke-width="1" /></svg>
<svg style="position:absolute;left:555px;top:278px;" width="16" height="16" viewBox="0 0 16 16"><path d="M10.45 0.72 L14.48 4.75 L14.48 10.45 L10.45 14.48 L4.75 14.48 L0.72 10.45 L0.72 4.75 L4.75 0.72 Z" fill="#fff" stroke="#5a5a5a" stroke-width="1" /><text x="7.7" y="10.5" font-size="7.5" font-family="Liberation Sans" font-weight="bold" text-anchor="middle" fill="#4a4a4a" style="letter-spacing:-0.3px">7</text></svg>
<svg style="position:absolute;left:575px;top:278px;" width="16" height="16" viewBox="0 0 16 16"><path d="M10.45 0.72 L14.48 4.75 L14.48 10.45 L10.45 14.48 L4.75 14.48 L0.72 10.45 L0.72 4.75 L4.75 0.72 Z" fill="#fff" stroke="#5a5a5a" stroke-width="1" /><text x="7.7" y="10.5" font-size="7.5" font-family="Liberation Sans" font-weight="bold" text-anchor="middle" fill="#4a4a4a" style="letter-spacing:-0.3px">8</text></svg>
<svg style="position:absolute;left:595px;top:278px;" width="16" height="16" viewBox="0 0 16 16"><path d="M10.45 0.72 L14.48 4.75 L14.48 10.45 L10.45 14.48 L4.75 14.48 L0.72 10.45 L0.72 4.75 L4.75 0.72 Z" fill="#fff" stroke="#5a5a5a" stroke-width="1" /><text x="7.7" y="10.5" font-size="7" font-family="Liberation Sans" font-weight="bold" text-anchor="middle" fill="#4a4a4a" style="letter-spacing:-0.3px">10</text></svg>
<svg style="position:absolute;left:375px;top:298px;" width="16" height="16" viewBox="0 0 16 16"><path d="M10.45 0.72 L14.48 4.75 L14.48 10.45 L10.45 14.48 L4.75 14.48 L0.72 10.45 L0.72 4.75 L4.75 0.72 Z" fill="#fff" stroke="#5a5a5a" stroke-width="1" /><text x="7.6" y="10.3" font-size="6.5" font-family="Liberation Sans" font-weight="bold" text-anchor="middle" fill="#4a4a4a" style="letter-spacing:-0.3px">12</text></svg>
<svg style="position:absolute;left:395px;top:298px;" width="16" height="16" viewBox="0 0 16 16"><path d="M7.5 0.5 A7 7 0 1 0 14.5 7.5 H7.5 Z" fill="#fff" stroke="#5a5a5a" stroke-width="1" /></svg>
<svg style="position:absolute;left:415px;top:298px;" width="16" height="16" viewBox="0 0 16 16"><path d="M7.5 0.5 A7 7 0 1 0 14.2 9.5 Z" fill="#fff" stroke="#5a5a5a" stroke-width="1" /></svg>
<svg style="position:absolute;left:435px;top:298px;" width="16" height="16" viewBox="0 0 16 16"><path d="M14.5 0.5 V7.5 A7 7 0 1 1 7.5 0.5 Z" fill="#fff" stroke="#5a5a5a" stroke-width="1" /></svg>
<svg style="position:absolute;left:455px;top:298px;" width="16" height="16" viewBox="0 0 16 16"><path d="M0.5 0.5 H14.5 V14.5 H0.5 Z" fill="#fff" stroke="#5a5a5a" stroke-width="1" /><path d="M2.5 2.5 H12.5 V12.5 H2.5 Z" fill="#fff" stroke="#5a5a5a" stroke-width="1" /></svg>
<svg style="position:absolute;left:475px;top:298px;" width="16" height="16" viewBox="0 0 16 16"><path d="M0.5 0.5 H14.5 L12.5 2.5 H2.5 V12.5 L0.5 14.5 Z" fill="#fff" stroke="#5a5a5a" stroke-width="1" /></svg>
<svg style="position:absolute;left:495px;top:298px;" width="16" height="16" viewBox="0 0 16 16"><path d="M1.5 0.5 H6.5 V9.5 H14.5 V14.5 H1.5 Z" fill="#fff" stroke="#5a5a5a" stroke-width="1" /></svg>
<svg style="position:absolute;left:515px;top:298px;" width="16" height="16" viewBox="0 0 16 16"><path d="M10.5 0.5 H14.5 L4.5 14.5 H0.5 Z" fill="#fff" stroke="#5a5a5a" stroke-width="1" /></svg>
<svg style="position:absolute;left:535px;top:298px;" width="16" height="16" viewBox="0 0 16 16"><path d="M5 0.5 H10 V5 H14.5 V10 H10 V14.5 H5 V10 H0.5 V5 H5 Z" fill="#fff" stroke="#5a5a5a" stroke-width="1" /></svg>
<svg style="position:absolute;left:555px;top:298px;" width="16" height="16" viewBox="0 0 16 16"><path d="M3 0.5 H12 V1.5 Q12 3 13.5 3 H14.5 V12 H13.5 Q12 12 12 13.5 V14.5 H3 V13.5 Q3 12 1.5 12 H0.5 V3 H1.5 Q3 3 3 1.5 Z" fill="#fff" stroke="#5a5a5a" stroke-width="1" /></svg>
<svg style="position:absolute;left:575px;top:298px;" width="16" height="16" viewBox="0 0 16 16"><path d="M2.5 3 V13 C2.5 15.5 12.5 15.5 12.5 13 V3 Z" fill="#fff" stroke="#5a5a5a" stroke-width="1" /><ellipse cx="7.5" cy="3" rx="5" ry="2.2" fill="#fff" stroke="#5a5a5a"/></svg>
<svg style="position:absolute;left:595px;top:298px;" width="16" height="16" viewBox="0 0 16 16"><path d="M0.5 4.5 H11 V14.5 H0.5 Z" fill="#fff" stroke="#5a5a5a" stroke-width="1" /><path d="M0.5 4.5 L4.5 0.5 H14.5 L11 4.5 Z" fill="#fff" stroke="#5a5a5a" stroke-width="1" /><path d="M11 4.5 L14.5 0.5 V10.5 L11 14.5 Z" fill="#fff" stroke="#5a5a5a" stroke-width="1" /></svg>
<svg style="position:absolute;left:375px;top:318px;" width="16" height="16" viewBox="0 0 16 16"><path d="M0.5 0.5 H14.5 V14.5 H0.5 Z" fill="#fff" stroke="#5a5a5a" stroke-width="1" /><path d="M2.5 2.5 H12.5 V12.5 H2.5 Z" fill="#fff" stroke="#5a5a5a" stroke-width="1" /><path d="M0.5 0.5 L2.5 2.5 M14.5 0.5 L12.5 2.5 M0.5 14.5 L2.5 12.5 M14.5 14.5 L12.5 12.5" fill="none" stroke="#5a5a5a" stroke-width="1" /></svg>
<svg style="position:absolute;left:395px;top:318px;" width="16" height="16" viewBox="0 0 16 16"><circle cx="7.5" cy="7.5" r="7" fill="#fff" stroke="#5a5a5a"/><circle cx="7.5" cy="7.5" r="4.3" fill="#fff" stroke="#5a5a5a"/></svg>
<svg style="position:absolute;left:415px;top:318px;" width="16" height="16" viewBox="0 0 16 16"><circle cx="7.5" cy="7.5" r="7" fill="#fff" stroke="#5a5a5a"/><circle cx="7.5" cy="7.5" r="4.8" fill="#fff" stroke="#5a5a5a"/><path d="M3.8 5.5 L5.5 3.8 L11.2 9.5 L9.5 11.2 Z" fill="#fff" stroke="#5a5a5a" stroke-width="1" /></svg>
<svg style="position:absolute;left:435px;top:318px;" width="16" height="16" viewBox="0 0 16 16"><path d="M0.5 10.5 A7 7 0 0 1 14.5 10.5 H12 A4.5 4.5 0 0 0 3 10.5 Z" fill="#fff" stroke="#5a5a5a" stroke-width="1" /></svg>
<svg style="position:absolute;left:455px;top:318px;" width="16" height="16" viewBox="0 0 16 16"><path d="M0.5 0.5 H14.5 V10.5 L10.5 14.5 H0.5 Z" fill="#fff" stroke="#5a5a5a" stroke-width="1" /><path d="M14.5 10.5 H11 V14.5" fill="none" stroke="#5a5a5a" stroke-width="1" /></svg>
<svg style="position:absolute;left:475px;top:318px;" width="16" height="16" viewBox="0 0 16 16"><circle cx="7.5" cy="7.5" r="7" fill="#fff" stroke="#5a5a5a"/><circle cx="5" cy="5.5" r="1" fill="none" stroke="#5a5a5a" stroke-width="0.8"/><circle cx="10" cy="5.5" r="1" fill="none" stroke="#5a5a5a" stroke-width="0.8"/><path d="M3.8 9 Q7.5 12.5 11.2 9" fill="none" stroke="#5a5a5a" stroke-width="1" /></svg>
<svg style="position:absolute;left:495px;top:318px;" width="16" height="16" viewBox="0 0 16 16"><path d="M7.5 14.5 L1.5 8 C-1 4.5 1.5 1 4.5 1 C6 1 7 2 7.5 3 C8 2 9 1 10.5 1 C13.5 1 16 4.5 13.5 8 Z" fill="#fff" stroke="#5a5a5a" stroke-width="1" /></svg>
<svg style="position:absolute;left:515px;top:318px;" width="16" height="16" viewBox="0 0 16 16"><path d="M0.50 2.50 L5.50 0.50 L9.50 5.00 L8.00 5.80 L12.50 9.30 L11.00 10.00 L15.50 15.50 L6.00 11.50 L7.50 10.80 L3.00 7.50 L4.50 6.80 Z" fill="#fff" stroke="#5a5a5a" stroke-width="1" /></svg>
<svg style="position:absolute;left:535px;top:318px;" width="16" height="16" viewBox="0 0 16 16"><circle cx="7.5" cy="7.5" r="3.8" fill="#fff" stroke="#5a5a5a"/><path d="M13.70 7.50 L14.90 7.50" stroke="#5a5a5a" stroke-width="1.5"/><path d="M11.88 11.88 L12.73 12.73" stroke="#5a5a5a" stroke-width="1.5"/><path d="M7.50 13.70 L7.50 14.90" stroke="#5a5a5a" stroke-width="1.5"/><path d="M3.12 11.88 L2.27 12.73" stroke="#5a5a5a" stroke-width="1.5"/><path d="M1.30 7.50 L0.10 7.50" stroke="#5a5a5a" stroke-width="1.5"/><path d="M3.12 3.12 L2.27 2.27" stroke="#5a5a5a" stroke-width="1.5"/><path d="M7.50 1.30 L7.50 0.10" stroke="#5a5a5a" stroke-width="1.5"/><path d="M11.88 3.12 L12.73 2.27" stroke="#5a5a5a" stroke-width="1.5"/></svg>
<svg style="position:absolute;left:555px;top:318px;" width="16" height="16" viewBox="0 0 16 16"><path d="M10.5 0.5 A7.2 7.2 0 1 0 10.5 14.5 A5.5 7 0 0 1 10.5 0.5 Z" fill="#fff" stroke="#5a5a5a" stroke-width="1" /></svg>
<svg style="position:absolute;left:575px;top:318px;" width="16" height="16" viewBox="0 0 16 16"><path d="M3 5 C2 2 6 0.5 7.5 2.5 C9 0.5 13 1 12.5 4 C15 4.5 15 8 12.5 9 C13.5 12 10 13.5 8.5 11.5 C7 13.5 3 13.5 3 11 C0 11 0 6.5 3 5 Z" fill="#fff" stroke="#5a5a5a" stroke-width="1" /></svg>
<svg style="position:absolute;left:595px;top:318px;" width="16" height="16" viewBox="0 0 16 16"><path d="M0.5 1.5 C8 1.5 14.5 7 14.5 14.5" fill="none" stroke="#5a5a5a" stroke-width="1" /></svg>
<svg style="position:absolute;left:375px;top:338px;" width="16" height="16" viewBox="0 0 16 16"><path d="M3.5 0.5 C1.5 0.5 0.5 1.5 0.5 3 V12 C0.5 13.5 1.5 14.5 3.5 14.5 M11.5 0.5 C13.5 0.5 14.5 1.5 14.5 3 V12 C14.5 13.5 13.5 14.5 11.5 14.5" fill="none" stroke="#5a5a5a" stroke-width="1" /></svg>
<svg style="position:absolute;left:395px;top:338px;" width="16" height="16" viewBox="0 0 16 16"><path d="M4 0.5 C2.5 0.5 2.5 1.5 2.5 3 V6 C2.5 7 1.5 7.5 0.5 7.5 C1.5 7.5 2.5 8 2.5 9 V12 C2.5 13.5 2.5 14.5 4 14.5 M11 0.5 C12.5 0.5 12.5 1.5 12.5 3 V6 C12.5 7 13.5 7.5 14.5 7.5 C13.5 7.5 12.5 8 12.5 9 V12 C12.5 13.5 12.5 14.5 11 14.5" fill="none" stroke="#5a5a5a" stroke-width="1" /></svg>
<svg style="position:absolute;left:415px;top:338px;" width="16" height="16" viewBox="0 0 16 16"><path d="M6.5 0.5 C4 0.5 3.5 1.5 3.5 3 V12 C3.5 13.5 4 14.5 6.5 14.5" fill="none" stroke="#5a5a5a" stroke-width="1" /></svg>
<svg style="position:absolute;left:435px;top:338px;" width="16" height="16" viewBox="0 0 16 16"><path d="M8.5 0.5 C11 0.5 11.5 1.5 11.5 3 V12 C11.5 13.5 11 14.5 8.5 14.5" fill="none" stroke="#5a5a5a" stroke-width="1" /></svg>
<svg style="position:absolute;left:455px;top:338px;" width="16" height="16" viewBox="0 0 16 16"><path d="M8.8 2.5 C7.3 2.5 7 3 7 4.5 V6 C7 7 6.5 7.3 5.5 7.3 C6.5 7.3 7 7.6 7 8.6 V10.5 C7 12 7.3 12.3 8.8 12.3" fill="none" stroke="#5a5a5a" stroke-width="1.4" /></svg>
<svg style="position:absolute;left:475px;top:338px;" width="16" height="16" viewBox="0 0 16 16"><path d="M6.2 2.5 C7.7 2.5 8 3 8 4.5 V6 C8 7 8.5 7.3 9.5 7.3 C8.5 7.3 8 7.6 8 8.6 V10.5 C8 12 7.7 12.3 6.2 12.3" fill="none" stroke="#5a5a5a" stroke-width="1.4" /></svg>
<div style="position:absolute;left:373px;top:356.00px;width:240px;height:21.5px;background:#e8e8e8;"></div>
<div class="t" style="left:382.5px;top:356.45px;font-size:11.4px;color:#5c5c5c;font-weight:bold;font-family:'Liberation Sans', sans-serif;">Block Arrows</div>
<div style="position:absolute;left:373px;top:354.60px;width:242px;height:24.00px;border:3px solid #ff0000;border-radius:2px;box-sizing:border-box;"></div>
<svg style="position:absolute;left:375px;top:380px;" width="16" height="16" viewBox="0 0 16 16"><path d="M0.5 4.5 H7.5 V0.5 L14.5 7.5 L7.5 14.5 V10.5 H0.5 Z" fill="#fff" stroke="#5a5a5a" stroke-width="1" /></svg>
<svg style="position:absolute;left:395px;top:380px;" width="16" height="16" viewBox="0 0 16 16"><path d="M14.5 4.5 H7.5 V0.5 L0.5 7.5 L7.5 14.5 V10.5 H14.5 Z" fill="#fff" stroke="#5a5a5a" stroke-width="1" /></svg>
<svg style="position:absolute;left:415px;top:380px;" width="16" height="16" viewBox="0 0 16 16"><path d="M7.5 0.5 L14.5 7.5 H10.5 V14.5 H4.5 V7.5 H0.5 Z" fill="#fff" stroke="#5a5a5a" stroke-width="1" /></svg>
<svg style="position:absolute;left:435px;top:380px;" width="16" height="16" viewBox="0 0 16 16"><path d="M4.5 0.5 H10.5 V7.5 H14.5 L7.5 14.5 L0.5 7.5 H4.5 Z" fill="#fff" stroke="#5a5a5a" stroke-width="1" /></svg>
<svg style="position:absolute;left:455px;top:380px;" width="16" height="16" viewBox="0 0 16 16"><path d="M0.5 8.5 L4.8 1.5 V5.5 H10.7 V1.5 L15 8.5 L10.7 15.5 V11.5 H4.8 V15.5 Z" fill="#fff" stroke="#5a5a5a" stroke-width="1" /></svg>
<svg style="position:absolute;left:475px;top:380px;" width="16" height="16" viewBox="0 0 16 16"><path d="M7.7 0.5 L14.8 5 H10.5 V11 H14.8 L7.7 15.5 L0.5 11 H4.8 V5 H0.5 Z" fill="#fff" stroke="#5a5a5a" stroke-width="1" /></svg>
<svg style="position:absolute;left:495px;top:380px;" width="16" height="16" viewBox="0 0 16 16"><path d="M7.5 0.5 L10 3 H8.5 V6.5 H12 V5 L14.5 7.5 L12 10 V8.5 H8.5 V12 H10 L7.5 14.5 L5 12 H6.5 V8.5 H3 V10 L0.5 7.5 L3 5 V6.5 H6.5 V3 H5 Z" fill="#fff" stroke="#5a5a5a" stroke-width="1" /></svg>
<svg style="position:absolute;left:515px;top:380px;" width="16" height="16" viewBox="0 0 16 16"><path d="M7.5 0.5 L10 3 H8.5 V9.5 H12 V8 L14.5 10.5 L12 13 V11.5 H3 V13 L0.5 10.5 L3 8 V9.5 H6.5 V3 H5 Z" fill="#fff" stroke="#5a5a5a" stroke-width="1" /></svg>
<svg style="position:absolute;left:535px;top:380px;" width="16" height="16" viewBox="0 0 16 16"><path d="M0.5 14.5 V7 Q0.5 3.5 4 3.5 H10 V0.5 L14.5 5 L10 9.5 V6.5 H4.5 Q3.5 6.5 3.5 7.5 V14.5 Z" fill="#fff" stroke="#5a5a5a" stroke-width="1" /></svg>
<svg style="position:absolute;left:555px;top:380px;" width="16" height="16" viewBox="0 0 16 16"><path d="M0.5 14.5 V6 A5.5 5.5 0 0 1 11.5 6 V8 H14 L10 12.5 L6 8 H8.5 V6 A2.5 2.5 0 0 0 3.5 6 V14.5 Z" fill="#fff" stroke="#5a5a5a" stroke-width="1" /></svg>
<svg style="position:absolute;left:575px;top:380px;" width="16" height="16" viewBox="0 0 16 16"><path d="M10.5 0.5 L14.5 4 H12.5 V12 H4 V14.5 L0.5 10.5 L4 6.5 V9 H9.5 V4 H7.5 Z" fill="#fff" stroke="#5a5a5a" stroke-width="1" /></svg>
<svg style="position:absolute;left:595px;top:380px;" width="16" height="16" viewBox="0 0 16 16"><path d="M0.5 10.5 H9.5 V4 H7.5 L11 0.5 L14.5 4 H12.5 V13.5 H0.5 Z" fill="#fff" stroke="#5a5a5a" stroke-width="1" /></svg>
<svg style="position:absolute;left:375px;top:400px;" width="16" height="16" viewBox="0 0 16 16"><path d="M9.5 0.5 C5 0.5 1.5 3 1.5 7 C1.5 10 3.5 12 6.5 12.5 V10.5 L10 13.5 L6.5 15.5 V13.8 C2.5 13.5 0.5 10.5 0.5 7.5 C0.5 3 4 0.8 9.5 0.5 Z" fill="#fff" stroke="#5a5a5a" stroke-width="1" /><path d="M9.5 0.5 V3 C6 3 3.8 5 3.8 8 C3.8 10 5 11.5 6.5 12.5" fill="#fff" stroke="#5a5a5a" stroke-width="1" /></svg>
<svg style="position:absolute;left:395px;top:400px;" width="16" height="16" viewBox="0 0 16 16"><path d="M5.5 0.5 C10 0.5 13.5 3 13.5 7 C13.5 10 11.5 12 8.5 12.5 V10.5 L5 13.5 L8.5 15.5 V13.8 C12.5 13.5 14.5 10.5 14.5 7.5 C14.5 3 11 0.8 5.5 0.5 Z" fill="#fff" stroke="#5a5a5a" stroke-width="1" /><path d="M5.5 0.5 V3 C9 3 11.2 5 11.2 8 C11.2 10 10 11.5 8.5 12.5" fill="#fff" stroke="#5a5a5a" stroke-width="1" /></svg>
<svg style="position:absolute;left:415px;top:400px;" width="16" height="16" viewBox="0 0 16 16"><path d="M0.5 3.5 H3.8 C4 7 5.5 9.5 7 10.5 C8.5 9 9.5 7 10.3 5 H8.3 L12 1.5 L15.8 5 H13 C12 8.5 10 11.5 7 11.5 C4 11.5 1 9 0.5 3.5 Z" fill="#fff" stroke="#5a5a5a" stroke-width="1" /></svg>
<svg style="position:absolute;left:435px;top:400px;" width="16" height="16" viewBox="0 0 16 16"><path d="M0.5 11.5 C0.5 6.5 3 3.5 7 3.5 C9.5 3.5 11.5 5.5 12.5 8.5 H15.5 L12 12.5 L8.5 8.5 H10 C9.5 7 8.5 6.5 7 6.5 C5 6.5 3.5 8.5 3.5 11.5 Z" fill="#fff" stroke="#5a5a5a" stroke-width="1" /></svg>
<svg style="position:absolute;left:455px;top:400px;" width="16" height="16" viewBox="0 0 16 16"><path d="M0.5 4.5 V10.5 M2.5 4.5 V10.5" fill="none" stroke="#5a5a5a" stroke-width="1" /><path d="M4.5 4.5 H8 V0.5 L14.5 7.5 L8 14.5 V10.5 H4.5 Z" fill="#fff" stroke="#5a5a5a" stroke-width="1" /></svg>
<svg style="position:absolute;left:475px;top:400px;" width="16" height="16" viewBox="0 0 16 16"><path d="M0.5 4 H7.5 V0.5 L14.5 7.5 L7.5 14.5 V11 H0.5 L3 7.5 Z" fill="#fff" stroke="#5a5a5a" stroke-width="1" /></svg>
<svg style="position:absolute;left:495px;top:400px;" width="16" height="16" viewBox="0 0 16 16"><path d="M0.5 2.5 H10 L14.5 7.5 L10 12.5 H0.5 Z" fill="#fff" stroke="#5a5a5a" stroke-width="1" /></svg>
<svg style="position:absolute;left:515px;top:400px;" width="16" height="16" viewBox="0 0 16 16"><path d="M0.5 2.5 H8 L13 7.5 L8 12.5 H0.5 L5.5 7.5 Z" fill="#fff" stroke="#5a5a5a" stroke-width="1" /></svg>
<svg style="position:absolute;left:535px;top:400px;" width="16" height="16" viewBox="0 0 16 16"><path d="M0.5 0.5 H8 V4.5 H10.5 V2.5 L14.5 7.5 L10.5 12.5 V10.5 H8 V14.5 H0.5 Z" fill="#fff" stroke="#5a5a5a" stroke-width="1" /></svg>
<svg style="position:absolute;left:555px;top:400px;" width="16" height="16" viewBox="0 0 16 16"><path d="M0.5 0.5 H14.5 V8 H10.5 V10 H12.5 L7.5 14.5 L2.5 10 H4.5 V8 H0.5 Z" fill="#fff" stroke="#5a5a5a" stroke-width="1" /></svg>
<svg style="position:absolute;left:575px;top:400px;" width="16" height="16" viewBox="0 0 16 16"><path d="M14.5 0.5 H7 V4.5 H4.5 V2.5 L0.5 7.5 L4.5 12.5 V10.5 H7 V14.5 H14.5 Z" fill="#fff" stroke="#5a5a5a" stroke-width="1" /></svg>
<svg style="position:absolute;left:595px;top:400px;" width="16" height="16" viewBox="0 0 16 16"><path d="M0.5 14.5 H14.5 V7 H10.5 V5 H12.5 L7.5 0.5 L2.5 5 H4.5 V7 H0.5 Z" fill="#fff" stroke="#5a5a5a" stroke-width="1" /></svg>
<svg style="position:absolute;left:375px;top:420px;" width="16" height="16" viewBox="0 0 16 16"><path d="M4.5 0.5 H11.5 V6.5 H13 V4 L15.8 7.5 L13 11 V8.5 H11.5 V15.5 H4.5 V8.5 H3 V11 L0.2 7.5 L3 4 V6.5 H4.5 Z" fill="#fff" stroke="#5a5a5a" stroke-width="1" /></svg>
<svg style="position:absolute;left:395px;top:420px;" width="16" height="16" viewBox="0 0 16 16"><path d="M7.80 0.20 L10.80 2.30 L9.00 2.30 L9.00 3.50 L12.10 3.50 L12.10 6.60 L13.30 6.60 L13.30 4.80 L15.40 7.80 L13.30 10.80 L13.30 9.00 L12.10 9.00 L12.10 12.10 L9.00 12.10 L9.00 13.30 L10.80 13.30 L7.80 15.40 L4.80 13.30 L6.60 13.30 L6.60 12.10 L3.50 12.10 L3.50 9.00 L2.30 9.00 L2.30 10.80 L0.20 7.80 L2.30 4.80 L2.30 6.60 L3.50 6.60 L3.50 3.50 L6.60 3.50 L6.60 2.30 L4.80 2.30 Z" fill="#fff" stroke="#5a5a5a" stroke-width="1" /></svg>
<svg style="position:absolute;left:415px;top:420px;" width="16" height="16" viewBox="0 0 16 16"><path d="M1.5 13.5 V7.5 A6 6 0 0 1 13.5 7.5 V9.5 H15 L11.5 14 L8 9.5 H10 V7.5 A2.5 2.5 0 0 0 5 7.5 V13.5 Z" fill="#fff" stroke="#5a5a5a" stroke-width="1" /></svg>
<div style="position:absolute;left:373px;top:438.25px;width:240px;height:21.5px;background:#e8e8e8;"></div>
<div class="t" style="left:382.5px;top:438.70px;font-size:11.4px;color:#5c5c5c;font-weight:bold;font-family:'Liberation Sans', sans-serif;">Equation Shapes</div>
<svg style="position:absolute;left:375px;top:462px;" width="16" height="16" viewBox="0 0 16 16"><path d="M5.5 1.5 H9.5 V5.5 H13.5 V9.5 H9.5 V13.5 H5.5 V9.5 H1.5 V5.5 H5.5 Z" fill="#fff" stroke="#5a5a5a" stroke-width="1" /></svg>
<svg style="position:absolute;left:395px;top:462px;" width="16" height="16" viewBox="0 0 16 16"><path d="M1.5 5.5 H13.5 V8.5 H1.5 Z" fill="#fff" stroke="#5a5a5a" stroke-width="1" /></svg>
<svg style="position:absolute;left:415px;top:462px;" width="16" height="16" viewBox="0 0 16 16"><path d="M3.5 1.5 L7.5 5.2 L11.5 1.5 L13.8 3.8 L10 7.5 L13.8 11.2 L11.5 13.5 L7.5 9.8 L3.5 13.5 L1.2 11.2 L5 7.5 L1.2 3.8 Z" fill="#fff" stroke="#5a5a5a" stroke-width="1" /></svg>
<svg style="position:absolute;left:435px;top:462px;" width="16" height="16" viewBox="0 0 16 16"><path d="M1 6.5 H14 V8 H1 Z" fill="#fff" stroke="#5a5a5a" stroke-width="1" /><circle cx="7.5" cy="3" r="1" fill="#fff" stroke="#5a5a5a" stroke-width="0.9"/><circle cx="7.5" cy="11.5" r="1" fill="#fff" stroke="#5a5a5a" stroke-width="0.9"/></svg>
<svg style="position:absolute;left:455px;top:462px;" width="16" height="16" viewBox="0 0 16 16"><path d="M1.5 3.5 H14 V6.5 H1.5 Z" fill="#fff" stroke="#5a5a5a" stroke-width="1" /><path d="M1.5 8.5 H14 V11.5 H1.5 Z" fill="#fff" stroke="#5a5a5a" stroke-width="1" /></svg>
<svg style="position:absolute;left:475px;top:462px;" width="16" height="16" viewBox="0 0 16 16"><path d="M1.5 3.5 H14 V6.5 H1.5 Z" fill="#fff" stroke="#5a5a5a" stroke-width="1" /><path d="M1.5 8.5 H14 V11.5 H1.5 Z" fill="#fff" stroke="#5a5a5a" stroke-width="1" /><path d="M3 14.5 L12 0.5 L13.5 1.5 L4.5 15 Z" fill="#fff" stroke="#5a5a5a" stroke-width="1" /></svg>
<div style="position:absolute;left:373px;top:480.00px;width:240px;height:21.5px;background:#e8e8e8;"></div>
<div class="t" style="left:382.5px;top:480.45px;font-size:11.4px;color:#5c5c5c;font-weight:bold;font-family:'Liberation Sans', sans-serif;">Flowchart</div>
<svg style="position:absolute;left:375px;top:504px;" width="16" height="16" viewBox="0 0 16 16"><path d="M0.5 2.5 H14.5 V12.5 H0.5 Z" fill="#fff" stroke="#5a5a5a" stroke-width="1" /></svg>
<svg style="position:absolute;left:395px;top:504px;" width="16" height="16" viewBox="0 0 16 16"><path d="M3 2.5 H12 L14.5 5 V10 L12 12.5 H3 L0.5 10 V5 Z" fill="#fff" stroke="#5a5a5a" stroke-width="1" /></svg>
<svg style="position:absolute;left:415px;top:504px;" width="16" height="16" viewBox="0 0 16 16"><path d="M7.50 4.00 L14.50 7.50 L7.50 11.00 L0.50 7.50 Z" fill="#fff" stroke="#5a5a5a" stroke-width="1" /></svg>
<svg style="position:absolute;left:435px;top:504px;" width="16" height="16" viewBox="0 0 16 16"><path d="M3.5 2.5 H14.5 L11.5 12.5 H0.5 Z" fill="#fff" stroke="#5a5a5a" stroke-width="1" /></svg>
<svg style="position:absolute;left:455px;top:504px;" width="16" height="16" viewBox="0 0 16 16"><path d="M0.5 2.5 H14.5 V12.5 H0.5 Z" fill="#fff" stroke="#5a5a5a" stroke-width="1" /><path d="M2.5 2.5 V12.5 M12.5 2.5 V12.5" fill="none" stroke="#5a5a5a" stroke-width="1" /></svg>
<svg style="position:absolute;left:475px;top:504px;" width="16" height="16" viewBox="0 0 16 16"><path d="M0.5 2.5 H14.5 V12.5 H0.5 Z" fill="#fff" stroke="#5a5a5a" stroke-width="1" /><path d="M2.5 2.5 V12.5 M0.5 4.5 H14.5" fill="none" stroke="#5a5a5a" stroke-width="1" /></svg>
<svg style="position:absolute;left:495px;top:504px;" width="16" height="16" viewBox="0 0 16 16"><path d="M0.5 1.5 H14.5 V10.5 C11 10.5 9 12 6 13 C3 13.5 1.5 13 0.5 12 Z" fill="#fff" stroke="#5a5a5a" stroke-width="1" /></svg>
<svg style="position:absolute;left:515px;top:504px;" width="16" height="16" viewBox="0 0 16 16"><path d="M4.5 1.5 H14.5 V9 H13 " fill="#fff" stroke="#5a5a5a" stroke-width="1" /><path d="M2.5 3.5 H12.5 V11 H11" fill="#fff" stroke="#5a5a5a" stroke-width="1" /><path d="M0.5 5.5 H10.5 V12 C8 12 6 13.5 3.5 13.5 C2 13.5 1 13 0.5 12.5 Z" fill="#fff" stroke="#5a5a5a" stroke-width="1" /></svg>
<svg style="position:absolute;left:535px;top:504px;" width="16" height="16" viewBox="0 0 16 16"><rect x="0.5" y="5" width="14" height="5.5" rx="2.75" fill="#fff" stroke="#5a5a5a"/></svg>
<svg style="position:absolute;left:555px;top:504px;" width="16" height="16" viewBox="0 0 16 16"><path d="M3.5 3 H11.5 L14.5 7.5 L11.5 12 H3.5 L0.5 7.5 Z" fill="#fff" stroke="#5a5a5a" stroke-width="1" /></svg>
<svg style="position:absolute;left:575px;top:504px;" width="16" height="16" viewBox="0 0 16 16"><path d="M0.5 5.5 L14.5 1.5 V12.5 H0.5 Z" fill="#fff" stroke="#5a5a5a" stroke-width="1" /></svg>
<svg style="position:absolute;left:595px;top:504px;" width="16" height="16" viewBox="0 0 16 16"><path d="M0.5 1.5 H14.5 L11.5 12.5 H3.5 Z" fill="#fff" stroke="#5a5a5a" stroke-width="1" /></svg>
<svg style="position:absolute;left:375px;top:524px;" width="16" height="16" viewBox="0 0 16 16"><circle cx="7.5" cy="7.5" r="4.5" fill="#fff" stroke="#5a5a5a"/></svg>
<svg style="position:absolute;left:395px;top:524px;" width="16" height="16" viewBox="0 0 16 16"><path d="M3.5 2.5 H11.5 V10 L7.5 12.5 L3.5 10 Z" fill="#fff" stroke="#5a5a5a" stroke-width="1" /></svg>
<svg style="position:absolute;left:415px;top:524px;" width="16" height="16" viewBox="0 0 16 16"><path d="M4 2.5 H14.5 V12.5 H0.5 V6 Z" fill="#fff" stroke="#5a5a5a" stroke-width="1" /></svg>
<svg style="position:absolute;left:435px;top:524px;" width="16" height="16" viewBox="0 0 16 16"><path d="M0.5 2.5 C3 4.5 5 4.5 7.5 3 C10 1.5 12 1.5 14.5 3 V12 C12 10 10 10 7.5 11.5 C5 13 3 13 0.5 11.5 Z" fill="#fff" stroke="#5a5a5a" stroke-width="1" /></svg>
<svg style="position:absolute;left:455px;top:524px;" width="16" height="16" viewBox="0 0 16 16"><circle cx="7.5" cy="7.5" r="7" fill="#fff" stroke="#5a5a5a"/><path d="M2.6 2.6 L12.4 12.4 M12.4 2.6 L2.6 12.4" fill="none" stroke="#5a5a5a" stroke-width="1" /></svg>
<svg style="position:absolute;left:475px;top:524px;" width="16" height="16" viewBox="0 0 16 16"><circle cx="7.5" cy="7.5" r="7" fill="#fff" stroke="#5a5a5a"/><path d="M7.5 0.5 V14.5 M0.5 7.5 H14.5" fill="none" stroke="#5a5a5a" stroke-width="1" /></svg>
<svg style="position:absolute;left:495px;top:524px;" width="16" height="16" viewBox="0 0 16 16"><path d="M3 0.5 H12 L3 14.5 H12 Z" fill="#fff" stroke="#5a5a5a" stroke-width="1" /></svg>
<svg style="position:absolute;left:515px;top:524px;" width="16" height="16" viewBox="0 0 16 16"><path d="M7.5 0.5 L11 7.5 L7.5 14.5 L4 7.5 Z" fill="#fff" stroke="#5a5a5a" stroke-width="1" /><path d="M4 7.5 H11" fill="none" stroke="#5a5a5a" stroke-width="1" /></svg>
<svg style="position:absolute;left:535px;top:524px;" width="16" height="16" viewBox="0 0 16 16"><path d="M7.5 1.5 L12.5 13.5 H2.5 Z" fill="#fff" stroke="#5a5a5a" stroke-width="1" /></svg>
<svg style="position:absolute;left:555px;top:524px;" width="16" height="16" viewBox="0 0 16 16"><path d="M2.5 1.5 H12.5 L7.5 13.5 Z" fill="#fff" stroke="#5a5a5a" stroke-width="1" /></svg>
<svg style="position:absolute;left:575px;top:524px;" width="16" height="16" viewBox="0 0 16 16"><path d="M3 2.5 H14.5 C13 4 12.5 6 12.5 7.5 C12.5 9.5 13 11 14.5 12.5 H3 C1.5 12.5 0.5 10 0.5 7.5 C0.5 5 1.5 2.5 3 2.5 Z" fill="#fff" stroke="#5a5a5a" stroke-width="1" /></svg>
<svg style="position:absolute;left:595px;top:524px;" width="16" height="16" viewBox="0 0 16 16"><path d="M0.5 0.5 H7 C11.5 0.5 14.5 3.5 14.5 7.5 C14.5 11.5 11.5 14.5 7 14.5 H0.5 Z" fill="#fff" stroke="#5a5a5a" stroke-width="1" /></svg>
<svg style="position:absolute;left:375px;top:544px;" width="16" height="16" viewBox="0 0 16 16"><path d="M7.5 14.5 H14.5 V13 H11.5 C13.5 11.8 14.5 9.8 14.5 7.5 A7 7 0 1 0 7.5 14.5 Z" fill="#fff" stroke="#5a5a5a" stroke-width="1" /></svg>
<svg style="position:absolute;left:395px;top:544px;" width="16" height="16" viewBox="0 0 16 16"><path d="M0.5 4 V11 C0.5 13.5 14.5 13.5 14.5 11 V4 Z" fill="#fff" stroke="#5a5a5a" stroke-width="1" /><ellipse cx="7.5" cy="4" rx="7" ry="2.5" fill="#fff" stroke="#5a5a5a"/></svg>
<svg style="position:absolute;left:415px;top:544px;" width="16" height="16" viewBox="0 0 16 16"><path d="M3.5 0.5 H11.5 C13.5 0.5 14.5 4 14.5 7.5 C14.5 11 13.5 14.5 11.5 14.5 H3.5 C1.5 14.5 0.5 11 0.5 7.5 C0.5 4 1.5 0.5 3.5 0.5 Z" fill="#fff" stroke="#5a5a5a" stroke-width="1" /><path d="M11.5 0.5 C9.5 0.5 8.5 4 8.5 7.5 C8.5 11 9.5 14.5 11.5 14.5" fill="none" stroke="#5a5a5a" stroke-width="1" /></svg>
<svg style="position:absolute;left:435px;top:544px;" width="16" height="16" viewBox="0 0 16 16"><path d="M4 0.5 H9 C12.5 0.5 14.5 4 14.5 7.5 C14.5 11 12.5 14.5 9 14.5 H4 L0.5 7.5 Z" fill="#fff" stroke="#5a5a5a" stroke-width="1" /></svg>
<div style="position:absolute;left:373px;top:562.25px;width:240px;height:21.5px;background:#e8e8e8;"></div>
<div class="t" style="left:382.5px;top:562.70px;font-size:11.4px;color:#5c5c5c;font-weight:bold;font-family:'Liberation Sans', sans-serif;">Stars and Banners</div>
<svg style="position:absolute;left:375px;top:586px;" width="16" height="16" viewBox="0 0 16 16"><path d="M7.00 0.00 L8.80 4.00 L12.50 1.50 L11.50 5.50 L15.00 6.50 L12.00 9.00 L14.50 12.50 L10.50 12.00 L10.00 15.00 L7.50 12.50 L4.50 15.00 L4.50 11.50 L0.50 12.50 L3.00 9.00 L0.00 6.50 L3.50 5.50 L2.50 1.50 L6.00 4.00 Z" fill="#fff" stroke="#5a5a5a" stroke-width="1" /></svg>
<svg style="position:absolute;left:395px;top:586px;" width="16" height="16" viewBox="0 0 16 16"><path d="M6.00 0.50 L8.50 3.00 L11.00 1.00 L11.50 4.00 L15.00 4.00 L13.00 7.00 L15.00 10.00 L12.00 11.00 L12.00 14.50 L9.00 12.50 L6.50 15.00 L5.00 12.00 L1.50 13.00 L2.50 9.50 L0.00 7.50 L2.50 5.50 L1.50 2.00 L5.00 3.00 Z" fill="#fff" stroke="#5a5a5a" stroke-width="1" /></svg>
<svg style="position:absolute;left:415px;top:586px;" width="16" height="16" viewBox="0 0 16 16"><path d="M7.50 0.20 L9.06 5.94 L14.80 7.50 L9.06 9.06 L7.50 14.80 L5.94 9.06 L0.20 7.50 L5.94 5.94 Z" fill="#fff" stroke="#5a5a5a" stroke-width="1" /></svg>
<svg style="position:absolute;left:435px;top:586px;" width="16" height="16" viewBox="0 0 16 16"><path d="M7.50 0.70 L9.44 5.53 L14.63 5.88 L10.64 9.22 L11.91 14.27 L7.50 11.50 L3.09 14.27 L4.36 9.22 L0.37 5.88 L5.56 5.53 Z" fill="#fff" stroke="#5a5a5a" stroke-width="1" /></svg>
<svg style="position:absolute;left:455px;top:586px;" width="16" height="16" viewBox="0 0 16 16"><path d="M7.50 0.00 L9.90 3.34 L14.00 3.75 L12.30 7.50 L14.00 11.25 L9.90 11.66 L7.50 15.00 L5.10 11.66 L1.00 11.25 L2.70 7.50 L1.00 3.75 L5.10 3.34 Z" fill="#fff" stroke="#5a5a5a" stroke-width="1" /></svg>
<svg style="position:absolute;left:475px;top:586px;" width="16" height="16" viewBox="0 0 16 16"><path d="M7.50 0.00 L9.76 2.81 L13.36 2.82 L12.57 6.34 L14.81 9.17 L11.57 10.74 L10.75 14.26 L7.50 12.70 L4.25 14.26 L3.43 10.74 L0.19 9.17 L2.43 6.34 L1.64 2.82 L5.24 2.81 Z" fill="#fff" stroke="#5a5a5a" stroke-width="1" /></svg>
<svg style="position:absolute;left:495px;top:586px;" width="16" height="16" viewBox="0 0 16 16"><path d="M7.50 0.00 L9.41 2.88 L12.80 2.20 L12.12 5.59 L15.00 7.50 L12.12 9.41 L12.80 12.80 L9.41 12.12 L7.50 15.00 L5.59 12.12 L2.20 12.80 L2.88 9.41 L0.00 7.50 L2.88 5.59 L2.20 2.20 L5.59 2.88 Z" fill="#fff" stroke="#5a5a5a" stroke-width="1" /><text x="7.5" y="10" font-size="6" font-family="Liberation Sans" font-weight="bold" text-anchor="middle" fill="#4a4a4a" style="letter-spacing:-0.3px">8</text></svg>
<svg style="position:absolute;left:515px;top:586px;" width="16" height="16" viewBox="0 0 16 16"><path d="M7.50 0.00 L9.23 2.17 L11.91 1.43 L12.03 4.21 L14.63 5.18 L13.10 7.50 L14.63 9.82 L12.03 10.79 L11.91 13.57 L9.23 12.83 L7.50 15.00 L5.77 12.83 L3.09 13.57 L2.97 10.79 L0.37 9.82 L1.90 7.50 L0.37 5.18 L2.97 4.21 L3.09 1.43 L5.77 2.17 Z" fill="#fff" stroke="#5a5a5a" stroke-width="1" /><text x="7.5" y="10" font-size="5.5" font-family="Liberation Sans" font-weight="bold" text-anchor="middle" fill="#4a4a4a" style="letter-spacing:-0.3px">10</text></svg>
<svg style="position:absolute;left:535px;top:586px;" width="16" height="16" viewBox="0 0 16 16"><path d="M7.50 -0.10 L8.98 1.99 L11.30 0.92 L11.53 3.47 L14.08 3.70 L13.01 6.02 L15.10 7.50 L13.01 8.98 L14.08 11.30 L11.53 11.53 L11.30 14.08 L8.98 13.01 L7.50 15.10 L6.02 13.01 L3.70 14.08 L3.47 11.53 L0.92 11.30 L1.99 8.98 L-0.10 7.50 L1.99 6.02 L0.92 3.70 L3.47 3.47 L3.70 0.92 L6.02 1.99 Z" fill="#fff" stroke="#5a5a5a" stroke-width="1" /><text x="7.5" y="10" font-size="5.5" font-family="Liberation Sans" font-weight="bold" text-anchor="middle" fill="#4a4a4a" style="letter-spacing:-0.3px">12</text></svg>
<svg style="position:absolute;left:555px;top:586px;" width="16" height="16" viewBox="0 0 16 16"><path d="M7.50 -0.10 L8.65 1.71 L10.41 0.48 L10.78 2.59 L12.87 2.13 L12.41 4.22 L14.52 4.59 L13.29 6.35 L15.10 7.50 L13.29 8.65 L14.52 10.41 L12.41 10.78 L12.87 12.87 L10.78 12.41 L10.41 14.52 L8.65 13.29 L7.50 15.10 L6.35 13.29 L4.59 14.52 L4.22 12.41 L2.13 12.87 L2.59 10.78 L0.48 10.41 L1.71 8.65 L-0.10 7.50 L1.71 6.35 L0.48 4.59 L2.59 4.22 L2.13 2.13 L4.22 2.59 L4.59 0.48 L6.35 1.71 Z" fill="#fff" stroke="#5a5a5a" stroke-width="1" /><text x="7.5" y="10" font-size="5.5" font-family="Liberation Sans" font-weight="bold" text-anchor="middle" fill="#4a4a4a" style="letter-spacing:-0.3px">16</text></svg>
<svg style="position:absolute;left:575px;top:586px;" width="16" height="16" viewBox="0 0 16 16"><path d="M7.50 -0.10 L8.28 1.55 L9.47 0.16 L9.80 1.96 L11.30 0.92 L11.15 2.74 L12.87 2.13 L12.26 3.85 L14.08 3.70 L13.04 5.20 L14.84 5.53 L13.45 6.72 L15.10 7.50 L13.45 8.28 L14.84 9.47 L13.04 9.80 L14.08 11.30 L12.26 11.15 L12.87 12.87 L11.15 12.26 L11.30 14.08 L9.80 13.04 L9.47 14.84 L8.28 13.45 L7.50 15.10 L6.72 13.45 L5.53 14.84 L5.20 13.04 L3.70 14.08 L3.85 12.26 L2.13 12.87 L2.74 11.15 L0.92 11.30 L1.96 9.80 L0.16 9.47 L1.55 8.28 L-0.10 7.50 L1.55 6.72 L0.16 5.53 L1.96 5.20 L0.92 3.70 L2.74 3.85 L2.13 2.13 L3.85 2.74 L3.70 0.92 L5.20 1.96 L5.53 0.16 L6.72 1.55 Z" fill="#fff" stroke="#5a5a5a" stroke-width="1" /><text x="7.5" y="10" font-size="5.5" font-family="Liberation Sans" font-weight="bold" text-anchor="middle" fill="#4a4a4a" style="letter-spacing:-0.3px">24</text></svg>
<svg style="position:absolute;left:595px;top:586px;" width="16" height="16" viewBox="0 0 16 16"><path d="M7.50 -0.10 L8.10 1.43 L8.98 0.05 L9.27 1.66 L10.41 0.48 L10.38 2.12 L11.72 1.18 L11.37 2.78 L12.87 2.13 L12.22 3.63 L13.82 3.28 L12.88 4.62 L14.52 4.59 L13.34 5.73 L14.95 6.02 L13.57 6.90 L15.10 7.50 L13.57 8.10 L14.95 8.98 L13.34 9.27 L14.52 10.41 L12.88 10.38 L13.82 11.72 L12.22 11.37 L12.87 12.87 L11.37 12.22 L11.72 13.82 L10.38 12.88 L10.41 14.52 L9.27 13.34 L8.98 14.95 L8.10 13.57 L7.50 15.10 L6.90 13.57 L6.02 14.95 L5.73 13.34 L4.59 14.52 L4.62 12.88 L3.28 13.82 L3.63 12.22 L2.13 12.87 L2.78 11.37 L1.18 11.72 L2.12 10.38 L0.48 10.41 L1.66 9.27 L0.05 8.98 L1.43 8.10 L-0.10 7.50 L1.43 6.90 L0.05 6.02 L1.66 5.73 L0.48 4.59 L2.12 4.62 L1.18 3.28 L2.78 3.63 L2.13 2.13 L3.63 2.78 L3.28 1.18 L4.62 2.12 L4.59 0.48 L5.73 1.66 L6.02 0.05 L6.90 1.43 Z" fill="#fff" stroke="#5a5a5a" stroke-width="1" /><text x="7.5" y="10" font-size="5.5" font-family="Liberation Sans" font-weight="bold" text-anchor="middle" fill="#4a4a4a" style="letter-spacing:-0.3px">32</text></svg>
<svg style="position:absolute;left:375px;top:606px;" width="16" height="16" viewBox="0 0 16 16"><path d="M4.50 2.50 L11.50 2.50 L11.50 4.50 L15.50 4.50 L13.00 8.00 L15.50 11.50 L0.50 11.50 L3.00 8.00 L0.50 4.50 L4.50 4.50 Z" fill="#fff" stroke="#5a5a5a" stroke-width="1" /><path d="M4.5 4.5 V11.5 M11.5 4.5 V11.5" fill="none" stroke="#5a5a5a" stroke-width="1" /></svg>
<svg style="position:absolute;left:395px;top:606px;" width="16" height="16" viewBox="0 0 16 16"><path d="M0.50 2.50 L15.50 2.50 L13.00 5.50 L15.50 8.50 L11.00 8.50 L11.00 11.50 L4.50 11.50 L4.50 8.50 L0.50 8.50 L3.00 5.50 Z" fill="#fff" stroke="#5a5a5a" stroke-width="1" /><path d="M4.5 2.5 V8.5 M11 2.5 V8.5" fill="none" stroke="#5a5a5a" stroke-width="1" /></svg>
<svg style="position:absolute;left:415px;top:606px;" width="16" height="16" viewBox="0 0 16 16"><path d="M0.5 5.5 H4 C4 3 5.5 1.2 8 1.2 C10.5 1.2 12 3 12 5.5 H15.5 L13 9 L15.5 12.5 H10 V10.5 C10 9.5 9 9 8 9 C7 9 6 9.5 6 10.5 V12.5 H0.5 L3 9 Z" fill="#fff" stroke="#5a5a5a" stroke-width="1" /><path d="M4 5.5 V10.5 H6 M12 5.5 V10.5 H10" fill="none" stroke="#5a5a5a" stroke-width="1" /></svg>
<svg style="position:absolute;left:435px;top:606px;" width="16" height="16" viewBox="0 0 16 16"><path d="M0.5 1.5 H5 V4 C5 5.5 6.5 6.5 8 6.5 C9.5 6.5 11 5.5 11 4 V1.5 H15.5 L13 4.5 L15.5 7.5 H12 C12 10.5 10.5 12.5 8 12.5 C5.5 12.5 4 10.5 4 7.5 H0.5 L3 4.5 Z" fill="#fff" stroke="#5a5a5a" stroke-width="1" /><path d="M4 7.5 V3.5 H5 M12 7.5 V3.5 H11" fill="none" stroke="#5a5a5a" stroke-width="1" /></svg>
<svg style="position:absolute;left:455px;top:606px;" width="16" height="16" viewBox="0 0 16 16"><path d="M4 0.5 H13 C14 0.5 14.5 1 14.5 2 C14.5 3 14 3.5 13 3.5 H11.5 V13 C11.5 14 11 14.5 10 14.5 H2 C1 14.5 0.5 14 0.5 13 C0.5 12 1 11.5 2 11.5 H3 V2 C3 1 3.5 0.5 4 0.5 Z" fill="#fff" stroke="#5a5a5a" stroke-width="1" /><path d="M3 11.5 H4 V13 M11.5 3.5 V2" fill="none" stroke="#5a5a5a" stroke-width="1" /></svg>
<svg style="position:absolute;left:475px;top:606px;" width="16" height="16" viewBox="0 0 16 16"><path d="M2 3.5 H12.5 V2 C12.5 1 13 0.5 13.5 0.5 C14 0.5 14.5 1 14.5 2 V11 C14.5 12 14 12.5 13 12.5 H3 V13.5 C3 14 2.5 14.5 2 14.5 C1 14.5 0.5 14 0.5 13.5 V5 C0.5 4 1 3.5 2 3.5 Z" fill="#fff" stroke="#5a5a5a" stroke-width="1" /><path d="M3 12.5 V5 M12.5 3.5 H14.5" fill="none" stroke="#5a5a5a" stroke-width="1" /></svg>
<svg style="position:absolute;left:495px;top:606px;" width="16" height="16" viewBox="0 0 16 16"><path d="M0.5 2.5 C2 0 6 -0.5 8.5 1.5 C11 3.8 13 3.8 15.5 1.5 V11.5 C13 13.8 10.5 13.8 8 12 C5.5 10 2.5 10 0.5 11.5 Z" fill="#fff" stroke="#5a5a5a" stroke-width="1" /></svg>
<svg style="position:absolute;left:515px;top:606px;" width="16" height="16" viewBox="0 0 16 16"><path d="M0.5 1.5 C2 0.5 3.5 0.5 5 2 C6.5 3.5 8 3 9.5 1.5 C11 0 12.5 0.5 13.5 2 C14.2 3 15 3 15.5 2.5 V13 C14.5 14 13.5 14.5 12.5 13.5 C11 12 10 12 8.5 13.5 C7 15 5.5 14.5 4.5 13 C3.5 11.8 1.5 12.2 0.5 13 Z" fill="#fff" stroke="#5a5a5a" stroke-width="1" /></svg>
<div style="position:absolute;left:373px;top:624.25px;width:240px;height:21.5px;background:#e8e8e8;"></div>
<div class="t" style="left:382.5px;top:624.70px;font-size:11.4px;color:#5c5c5c;font-weight:bold;font-family:'Liberation Sans', sans-serif;">Callouts</div>
<svg style="position:absolute;left:375px;top:648px;" width="16" height="16" viewBox="0 0 16 16"><path d="M0.5 1.5 H14.5 V10.5 H8.5 L5.5 14 L4.5 10.5 H0.5 Z" fill="#fff" stroke="#5a5a5a" stroke-width="1" /></svg>
<svg style="position:absolute;left:395px;top:648px;" width="16" height="16" viewBox="0 0 16 16"><path d="M3 1.5 H12 Q14.5 1.5 14.5 4 V8 Q14.5 10.5 12 10.5 H8.5 L6.5 13.5 L5.5 10.5 H3 Q0.5 10.5 0.5 8 V4 Q0.5 1.5 3 1.5 Z" fill="#fff" stroke="#5a5a5a" stroke-width="1" /></svg>
<svg style="position:absolute;left:415px;top:648px;" width="16" height="16" viewBox="0 0 16 16"><path d="M4.5 11.5 C2 10.5 0.5 8.5 0.5 6.5 C0.5 3.5 3.5 1 7.5 1 C11.5 1 14.5 3.5 14.5 6.5 C14.5 9.5 11.5 12 7.5 12 C6.5 12 6 12 5.5 11.8 L4 14 Z" fill="#fff" stroke="#5a5a5a" stroke-width="1" /></svg>
<svg style="position:absolute;left:435px;top:648px;" width="16" height="16" viewBox="0 0 16 16"><path d="M3.5 4.5 C3 2 6 0.5 8 2 C9.5 0.5 12.5 1 12.5 3.5 C15 4 15 7.5 12.5 8.5 C13 11 10 12 8.5 10.5 C7 12 4 12 3.5 10 C1 10 0.5 6 3.5 4.5 Z" fill="#fff" stroke="#5a5a5a" stroke-width="1" /><path d="M2 13 L1.5 14 M3.5 11.5 L2.5 12.5" fill="none" stroke="#5a5a5a" stroke-width="1" stroke-dasharray="1 1" stroke-dashoffset="0.5"/></svg>
<svg style="position:absolute;left:455px;top:648px;" width="16" height="16" viewBox="0 0 16 16"><path d="M6.5 1.5 H14.5 V8.5 H6.5 Z" fill="#fff" stroke="#5a5a5a" stroke-width="1" /><path d="M0.5 11.5 L6.5 6" fill="none" stroke="#5a5a5a" stroke-width="1" /></svg>
<svg style="position:absolute;left:475px;top:648px;" width="16" height="16" viewBox="0 0 16 16"><path d="M6.5 1.5 H14.5 V8.5 H6.5 Z" fill="#fff" stroke="#5a5a5a" stroke-width="1" /><path d="M0.5 11.5 L2 7.5 H6.5" fill="none" stroke="#5a5a5a" stroke-width="1.2" /></svg>
<svg style="position:absolute;left:495px;top:648px;" width="16" height="16" viewBox="0 0 16 16"><path d="M6.5 1.5 H14.5 V8.5 H6.5 Z" fill="#fff" stroke="#5a5a5a" stroke-width="1" /><path d="M6.5 5 H1.5 V11 L5 13" fill="none" stroke="#5a5a5a" stroke-width="1" /></svg>
<svg style="position:absolute;left:515px;top:648px;" width="16" height="16" viewBox="0 0 16 16"><path d="M6.5 1.5 H14.5 V8.5 H6.5 Z" fill="none" stroke="#5a5a5a" stroke-width="1" stroke-dasharray="1 1" stroke-dashoffset="0.5"/><path d="M0.5 11.5 L5 6.5 M5.5 1.5 V8.5" fill="none" stroke="#5a5a5a" stroke-width="1.1" /></svg>
<svg style="position:absolute;left:535px;top:648px;" width="16" height="16" viewBox="0 0 16 16"><path d="M6.5 1.5 H14.5 V8.5 H6.5 Z" fill="none" stroke="#5a5a5a" stroke-width="1" stroke-dasharray="1 1" stroke-dashoffset="0.5"/><path d="M0.5 11.5 L2 7.5 H5.5 M5.5 1.5 V8.5" fill="none" stroke="#5a5a5a" stroke-width="1.2" /></svg>
<svg style="position:absolute;left:555px;top:648px;" width="16" height="16" viewBox="0 0 16 16"><path d="M6.5 1.5 H14.5 V8.5 H6.5 Z" fill="none" stroke="#5a5a5a" stroke-width="1" stroke-dasharray="1 1" stroke-dashoffset="0.5"/><path d="M5.5 5 H1.5 V11 L5 13 M5.5 1.5 V8.5" fill="none" stroke="#5a5a5a" stroke-width="1" /></svg>
<svg style="position:absolute;left:575px;top:648px;" width="16" height="16" viewBox="0 0 16 16"><path d="M6.5 1.5 H14.5 V8.5 H6.5 Z" fill="none" stroke="#5a5a5a" stroke-width="1" stroke-dasharray="1 1" stroke-dashoffset="0.5"/><path d="M0.5 11.5 L6.5 6" fill="none" stroke="#5a5a5a" stroke-width="1" /></svg>
<svg style="position:absolute;left:595px;top:648px;" width="16" height="16" viewBox="0 0 16 16"><path d="M6.5 1.5 H14.5 V8.5 H6.5 Z" fill="none" stroke="#5a5a5a" stroke-width="1" stroke-dasharray="1 1" stroke-dashoffset="0.5"/><path d="M0.5 11.5 L2 7.5 H6.5" fill="none" stroke="#5a5a5a" stroke-width="1.2" /></svg>
<svg style="position:absolute;left:375px;top:668px;" width="16" height="16" viewBox="0 0 16 16"><path d="M6.5 1.5 H14.5 V8.5 H6.5 Z" fill="none" stroke="#5a5a5a" stroke-width="1" stroke-dasharray="1 1" stroke-dashoffset="0.5"/><path d="M6.5 5 H1.5 V11 L5 13" fill="none" stroke="#5a5a5a" stroke-width="1" /></svg>
<svg style="position:absolute;left:395px;top:668px;" width="16" height="16" viewBox="0 0 16 16"><path d="M7.5 1.5 H14.5 V8.5 H7.5 Z" fill="#fff" stroke="#5a5a5a" stroke-width="1" /><path d="M0.5 11.5 L5 6.5 M5.5 1.5 V8.5" fill="none" stroke="#5a5a5a" stroke-width="1.1" /></svg>
<svg style="position:absolute;left:415px;top:668px;" width="16" height="16" viewBox="0 0 16 16"><path d="M7.5 1.5 H14.5 V8.5 H7.5 Z" fill="#fff" stroke="#5a5a5a" stroke-width="1" /><path d="M0.5 11.5 L2 7.5 H5.5 M5.5 1.5 V8.5" fill="none" stroke="#5a5a5a" stroke-width="1.2" /></svg>
<svg style="position:absolute;left:435px;top:668px;" width="16" height="16" viewBox="0 0 16 16"><path d="M7.5 1.5 H14.5 V8.5 H7.5 Z" fill="#fff" stroke="#5a5a5a" stroke-width="1" /><path d="M5.5 5 H1.5 V11 L5 13 M5.5 1.5 V8.5" fill="none" stroke="#5a5a5a" stroke-width="1" /></svg>
<div style="position:absolute;left:625px;top:688px;width:2px;height:2px;background:#9a9a9a;"></div>
<div style="position:absolute;left:621px;top:692px;width:2px;height:2px;background:#9a9a9a;"></div>
<div style="position:absolute;left:625px;top:692px;width:2px;height:2px;background:#9a9a9a;"></div>
</body></html>
